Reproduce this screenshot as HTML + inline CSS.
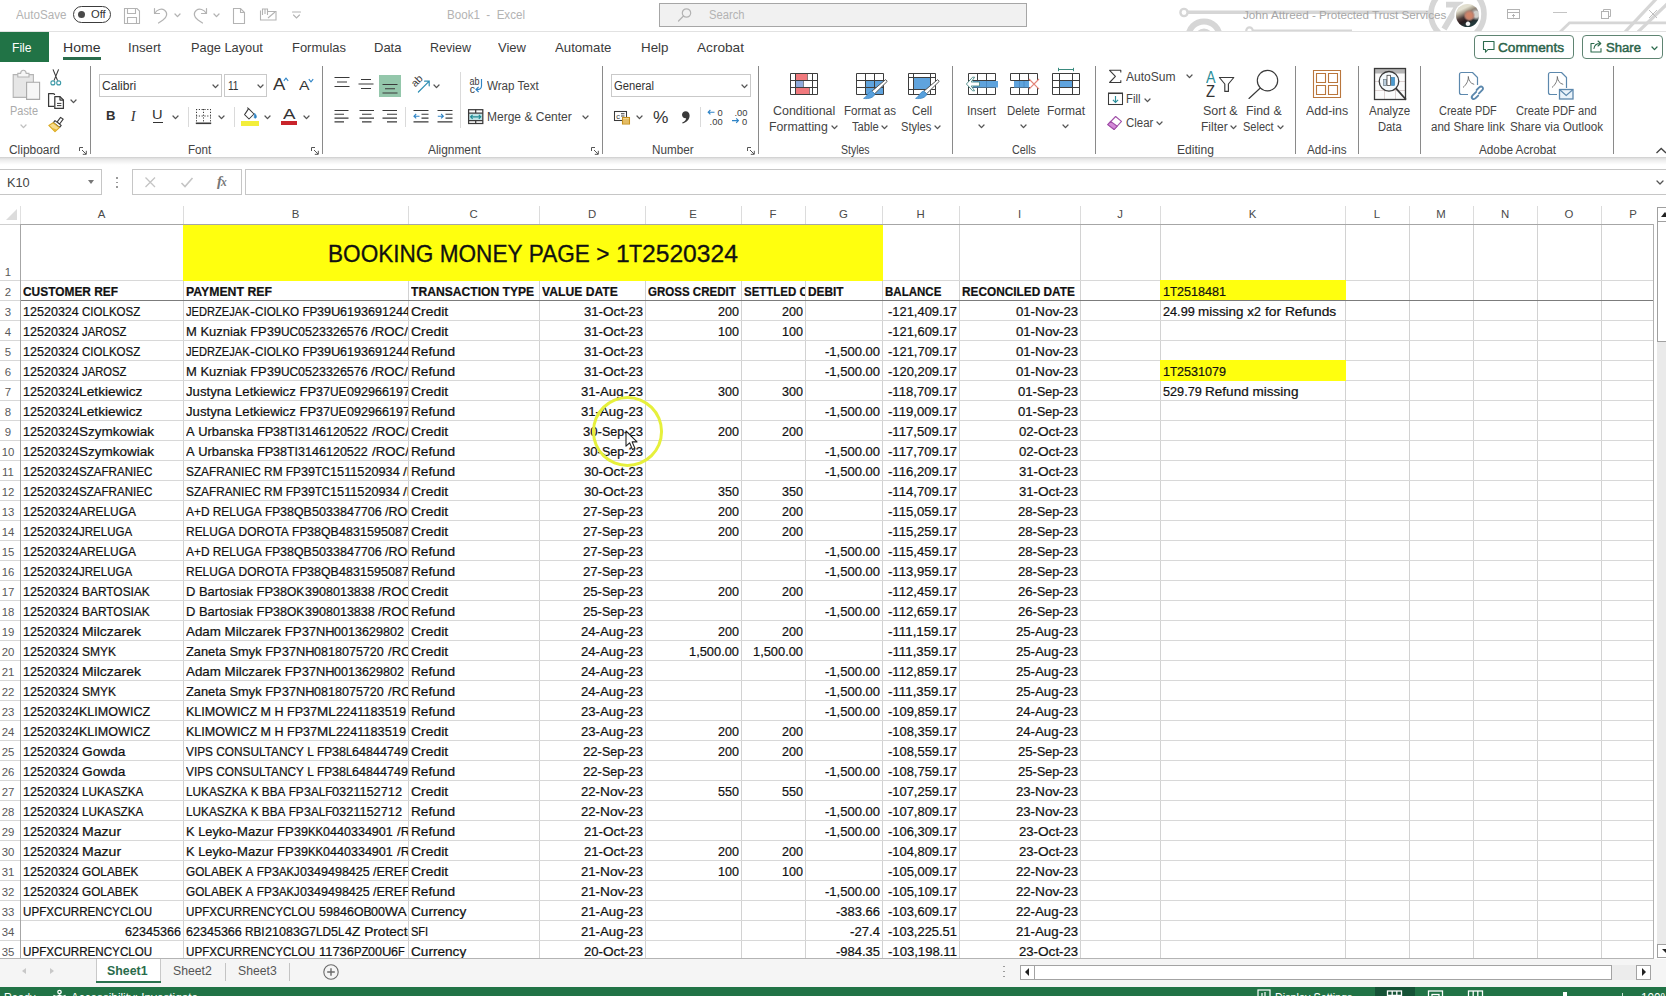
<!DOCTYPE html>
<html><head><meta charset="utf-8"><title>Book1 - Excel</title>
<style>
html,body{margin:0;padding:0;background:#fff}
body{width:1666px;height:996px;overflow:hidden}
#root{position:relative;width:1666px;height:996px;overflow:hidden;background:#fff;font-family:"Liberation Sans",sans-serif;color:#000}
div,span{box-sizing:border-box}
#grid{position:absolute;left:0;top:0;width:1666px;height:959px;overflow:hidden;pointer-events:none}
#grid>div{position:absolute}
.c{height:20px;line-height:20px;font-size:13.3px;white-space:nowrap;overflow:hidden;color:#111;padding-top:1px;-webkit-text-stroke:0.22px #111}
.c.b{font-weight:bold}
.c i{display:inline-block;font-style:normal;height:20px;vertical-align:top;text-align:left;overflow:visible}
.c u{display:inline-block;text-decoration:none;transform-origin:0 50%;white-space:pre}
.vl{top:225px;width:1px;height:734px;background:#d2d2d2}
.vl2{top:206px;width:1px;height:18px;background:#dcdcdc}
.hl{left:0;width:1654px;height:1px;background:#d8d8d8}
.ch{top:205px;width:20px;height:19px;line-height:19px;text-align:center;font-size:11.4px;color:#4a4a4a}
.rh{left:-4px;width:24px;height:20px;line-height:20px;text-align:center;font-size:11.4px;color:#5a5a5a;padding-top:1px}
.yl{background:#ffff0e}
.title{height:56px;line-height:56px;text-align:center;white-space:nowrap;color:#111;overflow:hidden;-webkit-text-stroke:0.3px #111}
.title i{display:inline-block;font-style:normal;height:56px;vertical-align:top;text-align:left}
.title u{display:inline-block;text-decoration:none;transform-origin:0 50%;white-space:pre}
.a{position:absolute;display:block}
.t{position:absolute;white-space:nowrap;line-height:1;transform-origin:0 50%;display:block}
svg{overflow:visible}

</style></head>
<body>
<div id="root">
<svg class="a" style="left:0px;top:0px;overflow:hidden;" width="1666" height="31" viewBox="0 0 1666 31">
<g fill="none" stroke="#d6d6d6" stroke-width="3" stroke-linecap="butt">
<path d="M1188 12.2 H1432" stroke-width="3.4"/>
<circle cx="1184" cy="12.5" r="3.6" stroke-width="2.4"/>
<circle cx="1204" cy="37" r="15.6" stroke-width="6"/>
<circle cx="1204" cy="37.5" r="7.6" stroke-width="3"/>
<circle cx="1249.5" cy="30.5" r="3.2" stroke-width="2.2"/>
<path d="M1253 31 H1352"/>
<circle cx="1457.5" cy="14" r="26.5" stroke-width="5.6"/>
<path d="M1446 4.6 H1458.5 L1444 29" stroke-width="5.8"/>
<path d="M1666 22.8 H1569.5 L1560 32" stroke-width="2.8"/>
<path d="M1657 -2 L1625 32" stroke-width="3.2"/>
<path d="M1668 3 L1638 32" stroke-width="3.2"/>
</g></svg>
<span class="t" style="left:16.0px;top:8.8px;font-size:12px;color:#b3b3b3;transform:scaleX(0.9704);">AutoSave</span>
<div class="a" style="left:72.5px;top:6px;width:38.5px;height:16.5px;background:#fff;border:1.4px solid #3c3c3c;border-radius:9px;"></div>
<div class="a" style="left:78px;top:10.8px;width:6.799999999999997px;height:6.800000000000001px;background:#4a4a4a;border-radius:4px;"></div>
<span class="t" style="left:91.3px;top:9.0px;font-size:11.5px;color:#333;transform:scaleX(0.9718);">Off</span>
<svg class="a" style="left:123px;top:7px;" width="18" height="18" viewBox="0 0 18 18"><g fill="none" stroke="#b3b3b3" stroke-width="1.1"><path d="M1.5 1.5 H14 L16.5 4 V16.5 H1.5 Z"/><path d="M4.5 1.5 V6.5 H12.5 V1.5"/><path d="M4.5 16.5 V10.5 H13.5 V16.5"/></g></svg>
<svg class="a" style="left:152px;top:6px;" width="18" height="18" viewBox="0 0 18 18"><g fill="none" stroke="#b3b3b3" stroke-width="1.2" stroke-linecap="round" stroke-linejoin="round"><path d="M2.5 2.5 V7.5 H7.5"/><path d="M2.8 7.2 C5 3.5 9.5 2 12.6 4.2 C16 6.8 15 11.5 11 14 L6.5 17"/></g></svg>
<svg class="a" style="left:174.0px;top:12.5px;" width="7.0" height="4.6" viewBox="0 0 7.0 4.6"><path d="M1 1 L3.5 3.6 L6.0 1" fill="none" stroke="#b3b3b3" stroke-width="1.3" stroke-linecap="round" stroke-linejoin="round"/></svg>
<svg class="a" style="left:191px;top:6px;" width="18" height="18" viewBox="0 0 18 18"><g fill="none" stroke="#b3b3b3" stroke-width="1.2" stroke-linecap="round" stroke-linejoin="round"><path d="M15.5 2.5 V7.5 H10.5"/><path d="M15.2 7.2 C13 3.5 8.5 2 5.4 4.2 C2 6.8 3 11.5 7 14 L11.5 17"/></g></svg>
<svg class="a" style="left:213.0px;top:12.5px;" width="7.0" height="4.6" viewBox="0 0 7.0 4.6"><path d="M1 1 L3.5 3.6 L6.0 1" fill="none" stroke="#b3b3b3" stroke-width="1.3" stroke-linecap="round" stroke-linejoin="round"/></svg>
<svg class="a" style="left:231px;top:7px;" width="16" height="18" viewBox="0 0 16 18"><g fill="none" stroke="#b3b3b3" stroke-width="1.1"><path d="M2.5 1.5 H9.5 L13.5 5.5 V16.5 H2.5 Z"/><path d="M9.5 1.5 V5.5 H13.5"/></g></svg>
<svg class="a" style="left:259px;top:7px;" width="19" height="15" viewBox="0 0 19 15"><g fill="none" stroke="#b3b3b3" stroke-width="1.1"><path d="M1.5 3.5 V13 H17 V4.5 H9"/><path d="M3.5 8 V2 H8.5 V8"/><path d="M6 2 V7"/><path d="M9 11 L16 5"/></g></svg>
<svg class="a" style="left:291px;top:10px;" width="11" height="10" viewBox="0 0 11 10"><g fill="none" stroke="#b3b3b3" stroke-width="1.1" stroke-linecap="round"><path d="M1.5 2 H9.5"/><path d="M2.5 5 L5.5 8 L8.5 5"/></g></svg>
<span class="t" style="left:446.5px;top:9.1px;font-size:12px;color:#b3b3b3;transform:scaleX(0.9665);white-space:pre;">Book1  -  Excel</span>
<div class="a" style="left:659px;top:3px;width:368px;height:24px;background:#f1f1f1;border:1px solid #a6a6a6;"></div>
<svg class="a" style="left:676px;top:7px;" width="18" height="16" viewBox="0 0 18 16"><g fill="none" stroke="#b3b3b3" stroke-width="1.2" stroke-linecap="round"><circle cx="10.5" cy="6" r="4.2"/><path d="M7.5 9 L2.5 14"/></g></svg>
<span class="t" style="left:709.0px;top:8.8px;font-size:12px;color:#b3b3b3;transform:scaleX(0.9336);">Search</span>
<span class="t" style="left:1242.5px;top:9.8px;font-size:11.4px;color:#a6a6a6;transform:scaleX(1.0261);">John Attreed - Protected Trust Services</span>
<div class="a" style="left:1456.2px;top:4.2px;width:22.8px;height:22.8px;border-radius:50%;box-shadow:0 0 0 1.6px #fff;background:radial-gradient(circle at 52% 86%, #f4f4f4 0 7%, rgba(255,255,255,0) 12%),radial-gradient(circle at 58% 50%, #cf8468 0 14%, #b9806e 22%, rgba(160,110,100,0) 34%),radial-gradient(circle at 88% 45%, #cfcfcb 0 12%, rgba(200,200,200,0) 26%),linear-gradient(155deg, #e2dfcf 0 24%, #a79d8c 36%, #4a3a38 50%, #2a1c1e 62%, #22383a 80%, #1c3a3c 100%)"></div>
<svg class="a" style="left:1506px;top:8px;" width="15" height="12" viewBox="0 0 15 12"><g fill="none" stroke="#b3b3b3" stroke-width="1"><rect x="1.5" y="1.5" width="12" height="9"/><path d="M1.5 4.5 H13.5"/><path d="M7.5 6 V9.5 M6 7.5 H9"/></g></svg>
<div class="a" style="left:1553px;top:11.5px;width:14px;height:1.0px;background:#c4c4c4;"></div>
<svg class="a" style="left:1600px;top:8px;" width="12" height="12" viewBox="0 0 12 12"><g fill="none" stroke="#b3b3b3" stroke-width="1"><rect x="1.5" y="3.5" width="7" height="7"/><path d="M3.5 3.5 V1.5 H10.5 V8.5 H8.5"/></g></svg>
<svg class="a" style="left:1647.5px;top:9px;" width="10" height="10" viewBox="0 0 10 10"><g fill="none" stroke="#c0c0c0" stroke-width="1"><path d="M1 1 L9 9 M9 1 L1 9"/></g></svg>
<div class="a" style="left:0px;top:31px;width:1666px;height:1px;background:#e2e2e2;"></div>
<div class="a" style="left:0px;top:32px;width:49px;height:30px;background:#217346;"></div>
<span class="t" style="left:11.7px;top:42.0px;font-size:12.2px;color:#fff;transform:scaleX(0.9970);">File</span>
<span class="t" style="left:63.0px;top:42.0px;font-size:12.2px;color:#333;transform:scaleX(1.1523);">Home</span>
<span class="t" style="left:127.5px;top:42.0px;font-size:12.2px;color:#3b3b3b;transform:scaleX(1.0815);">Insert</span>
<span class="t" style="left:190.5px;top:42.0px;font-size:12.2px;color:#3b3b3b;transform:scaleX(1.0509);">Page Layout</span>
<span class="t" style="left:291.5px;top:42.0px;font-size:12.2px;color:#3b3b3b;transform:scaleX(1.0620);">Formulas</span>
<span class="t" style="left:373.5px;top:42.0px;font-size:12.2px;color:#3b3b3b;transform:scaleX(1.0671);">Data</span>
<span class="t" style="left:429.5px;top:42.0px;font-size:12.2px;color:#3b3b3b;transform:scaleX(1.0249);">Review</span>
<span class="t" style="left:497.5px;top:42.0px;font-size:12.2px;color:#3b3b3b;transform:scaleX(1.0677);">View</span>
<span class="t" style="left:554.5px;top:42.0px;font-size:12.2px;color:#3b3b3b;transform:scaleX(1.0819);">Automate</span>
<span class="t" style="left:640.5px;top:42.0px;font-size:12.2px;color:#3b3b3b;transform:scaleX(1.0960);">Help</span>
<span class="t" style="left:696.5px;top:42.0px;font-size:12.2px;color:#3b3b3b;transform:scaleX(1.1178);">Acrobat</span>
<div class="a" style="left:63px;top:57px;width:38px;height:3px;background:#2a6c4c;"></div>
<div class="a" style="left:1474px;top:35px;width:100px;height:23.5px;background:#fff;border:1px solid #5f8472;border-radius:4px;"></div>
<svg class="a" style="left:1482px;top:40px;" width="14" height="14" viewBox="0 0 14 14"><path d="M1.5 1.5 H12 V9.5 H6 L3.5 12.2 V9.5 H1.5 Z" fill="none" stroke="#2b6a4c" stroke-width="1.1" stroke-linejoin="round"/></svg>
<span class="t" style="left:1498.0px;top:41.8px;font-size:12.5px;color:#2b6349;transform:scaleX(1.0921);-webkit-text-stroke:0.45px #2b6349;">Comments</span>
<div class="a" style="left:1582px;top:35px;width:81px;height:23.5px;background:#fff;border:1px solid #5f8472;border-radius:4px;"></div>
<svg class="a" style="left:1589px;top:39px;" width="15" height="15" viewBox="0 0 15 15"><g fill="none" stroke="#2b6a4c" stroke-width="1.1" stroke-linejoin="round" stroke-linecap="round"><path d="M5 4.5 H2 V13 H12 V9.5"/><path d="M5 9.5 C5.5 6 8 4.5 11 4.5 M9 2 L11.8 4.5 L9 7"/></g></svg>
<span class="t" style="left:1605.5px;top:41.8px;font-size:12.5px;color:#2b6349;transform:scaleX(1.0492);-webkit-text-stroke:0.45px #2b6349;">Share</span>
<svg class="a" style="left:1651.0px;top:45.9px;" width="7.0" height="4.6" viewBox="0 0 7.0 4.6"><path d="M1 1 L3.5 3.6 L6.0 1" fill="none" stroke="#2b6a4c" stroke-width="1.3" stroke-linecap="round" stroke-linejoin="round"/></svg>
<div class="a" style="left:0;top:157px;width:1666px;height:8px;background:linear-gradient(#c9c9c9 0,#dedede 1px,#ececec 3px,#f8f8f8 6px,#fff 8px)"></div>
<div class="a" style="left:-1px;top:169px;width:103px;height:26px;background:#fff;border:1px solid #c6c6c6;"></div>
<span class="t" style="left:6.8px;top:177.0px;font-size:12px;color:#444;transform:scaleX(1.0631);">K10</span>
<div class="a" style="left:87.5px;top:179.5px;width:0;height:0;border-left:3.6px solid transparent;border-right:3.6px solid transparent;border-top:4.2px solid #777"></div>
<div class="a" style="left:116px;top:177px;width:1.5px;height:1.5px;background:#9a9a9a;"></div>
<div class="a" style="left:116px;top:181.7px;width:1.5px;height:1.5px;background:#9a9a9a;"></div>
<div class="a" style="left:116px;top:186.2px;width:1.5px;height:1.5px;background:#9a9a9a;"></div>
<div class="a" style="left:132px;top:169px;width:110px;height:26px;background:#fff;border:1px solid #c6c6c6;"></div>
<svg class="a" style="left:144px;top:176px;" width="13" height="13" viewBox="0 0 13 13"><path d="M1.5 1.5 L11 11 M11 1.5 L1.5 11" stroke="#c4c4c4" stroke-width="1.3" fill="none"/></svg>
<svg class="a" style="left:180px;top:176px;" width="15" height="13" viewBox="0 0 15 13"><path d="M1.5 7 L5 10.5 L12.5 2" stroke="#c4c4c4" stroke-width="1.6" fill="none"/></svg>
<span class="t" style="left:217px;top:174px;font-family:'Liberation Serif',serif;font-style:italic;font-weight:bold;font-size:15px;color:#777;letter-spacing:-1px">f<span style="font-size:11.5px">x</span></span>
<div class="a" style="left:245px;top:169px;width:1422px;height:26px;background:#fff;border:1px solid #c6c6c6;"></div>
<svg class="a" style="left:1656.0px;top:179.7px;" width="8" height="5" viewBox="0 0 8 5"><path d="M1 1 L4.0 4 L7 1" fill="none" stroke="#555" stroke-width="1.3" stroke-linecap="round" stroke-linejoin="round"/></svg>
<svg class="a" style="left:11px;top:68px;" width="30" height="33" viewBox="0 0 30 33"><g stroke="#b4b4b4" stroke-width="1.1">
<path d="M2.2 6.6 H22.4 V29.4 H2.2 Z" fill="#e6e6e6"/>
<path d="M6.8 9 V5.4 H9.6 C9.8 1.2 15 1.2 15.2 5.4 H18 V9 Z" fill="#f6f6f6"/>
<path d="M15.6 14.2 H28.6 V31.4 H15.6 Z" fill="#f6f6f6" stroke="#a9a9a9"/></g></svg>
<span class="t" style="left:10.0px;top:104.7px;font-size:12px;color:#ababab;transform:scaleX(0.9125);">Paste</span>
<svg class="a" style="left:20.0px;top:124.0px;" width="7.0" height="4.6" viewBox="0 0 7.0 4.6"><path d="M1 1 L3.5 3.6 L6.0 1" fill="none" stroke="#c0c0c0" stroke-width="1.3" stroke-linecap="round" stroke-linejoin="round"/></svg>
<svg class="a" style="left:49px;top:68px;" width="14" height="18" viewBox="0 0 14 18"><g fill="none" stroke-width="1.1"><path d="M4 1.4 L8.6 12.6 M9.6 1.4 L5 12.6" stroke="#3a3a3a"/>
<circle cx="3.9" cy="14.9" r="2" stroke="#3c9aa8"/><circle cx="9.7" cy="14.9" r="2" stroke="#3c9aa8"/></g></svg>
<svg class="a" style="left:47px;top:92px;" width="18" height="18" viewBox="0 0 18 18"><g fill="none" stroke="#3a3a3a" stroke-width="1.25" stroke-linejoin="round"><path d="M7 14.4 H1.6 V1.6 H6.2 Q7.6 1.6 7.6 3"/><path d="M7.8 4.6 H13 L16.4 8 V16.4 H7.8 Z" fill="#fff"/><path d="M13 4.6 V8 H16.4"/>
<path d="M10 11.4 H14.4 M10 13.6 H14.4" stroke-width="1"/></g></svg>
<svg class="a" style="left:69.8px;top:99.0px;" width="7.0" height="4.6" viewBox="0 0 7.0 4.6"><path d="M1 1 L3.5 3.6 L6.0 1" fill="none" stroke="#555" stroke-width="1.3" stroke-linecap="round" stroke-linejoin="round"/></svg>
<svg class="a" style="left:47px;top:116px;" width="18" height="17" viewBox="0 0 18 17"><g stroke-width="1.1" stroke-linejoin="round"><path d="M13.6 1.4 L16.2 3.2 L12.6 8 L10 6.2 Z" fill="#fff" stroke="#3a3a3a"/>
<path d="M8 4.6 L14.2 9.4 L12.6 11.4 L6.4 6.6 Z" fill="#fff" stroke="#3a3a3a"/>
<path d="M6.2 6.8 L12.4 11.6 L8 15.6 L1.8 9.4 Z" fill="#f7dc8c" stroke="#d9a820"/><path d="M3.6 11.2 L8 15.6 L10 13.8 Z" fill="#e6b832" stroke="none"/></g></svg>
<span class="t" style="left:9.0px;top:144.1px;font-size:12px;color:#444;transform:scaleX(0.9929);">Clipboard</span>
<svg class="a" style="left:79px;top:146.5px;" width="8" height="8" viewBox="0 0 8 8"><g fill="none" stroke="#555" stroke-width="1"><path d="M0.5 4 V0.5 H4"/><path d="M3 3 L7 7"/><path d="M7.3 3.8 V7.3 H3.8"/></g></svg>
<div class="a" style="left:90px;top:66px;width:1px;height:88px;background:#8a8a8a;"></div>
<div class="a" style="left:99px;top:74px;width:123px;height:23px;background:#fff;border:1px solid #c9c9c9;"></div>
<span class="t" style="left:102.3px;top:79.8px;font-size:12px;color:#333;transform:scaleX(1.0056);">Calibri</span>
<svg class="a" style="left:212.0px;top:83.7px;" width="7.0" height="4.6" viewBox="0 0 7.0 4.6"><path d="M1 1 L3.5 3.6 L6.0 1" fill="none" stroke="#555" stroke-width="1.3" stroke-linecap="round" stroke-linejoin="round"/></svg>
<div class="a" style="left:224px;top:74px;width:42.5px;height:23px;background:#fff;border:1px solid #c9c9c9;"></div>
<span class="t" style="left:227.5px;top:79.8px;font-size:12px;color:#333;transform:scaleX(0.8429);">11</span>
<svg class="a" style="left:256.5px;top:83.7px;" width="7.0" height="4.6" viewBox="0 0 7.0 4.6"><path d="M1 1 L3.5 3.6 L6.0 1" fill="none" stroke="#555" stroke-width="1.3" stroke-linecap="round" stroke-linejoin="round"/></svg>
<span class="t" style="left:272.7px;top:75.7px;font-size:16.5px;color:#333;transform:scaleX(1.1176);">A</span>
<svg class="a" style="left:283px;top:77px;" width="6" height="5" viewBox="0 0 6 5"><path d="M0.8 3.8 L3 1.2 L5.2 3.8" fill="none" stroke="#2f84c6" stroke-width="1.1"/></svg>
<span class="t" style="left:298.5px;top:78.9px;font-size:13.2px;color:#333;transform:scaleX(1.1925);">A</span>
<svg class="a" style="left:307.5px;top:77.5px;" width="6" height="5" viewBox="0 0 6 5"><path d="M0.8 1.2 L3 3.8 L5.2 1.2" fill="none" stroke="#2f84c6" stroke-width="1.1"/></svg>
<span class="t" style="left:105.5px;top:109.0px;font-size:13.5px;color:#333;transform:scaleX(0.9744);font-weight:bold;">B</span>
<span class="t" style="left:130.8px;top:108.6px;font-size:14.5px;font-style:italic;color:#333;font-family:'Liberation Serif',serif">I</span>
<span class="t" style="left:152.1px;top:109.1px;font-size:12.5px;color:#333;transform:scaleX(1.1742);">U</span>
<div class="a" style="left:152.5px;top:121.8px;width:10.0px;height:1.1000000000000085px;background:#333;"></div>
<svg class="a" style="left:171.8px;top:115.2px;" width="7.0" height="4.6" viewBox="0 0 7.0 4.6"><path d="M1 1 L3.5 3.6 L6.0 1" fill="none" stroke="#555" stroke-width="1.3" stroke-linecap="round" stroke-linejoin="round"/></svg>
<div class="a" style="left:188px;top:107px;width:1px;height:20px;background:#dadada;"></div>
<svg class="a" style="left:195px;top:108px;" width="17" height="17" viewBox="0 0 17 17"><g fill="none" stroke="#3a3a3a"><path d="M1 1.5 H16 M1.5 1 V14 M15.5 1 V14 M8.5 1 V14 M1 8 H16" stroke-width="1" stroke-dasharray="1.2 1.6"/>
<path d="M0.8 15.3 H16.2" stroke-width="1.6"/></g></svg>
<svg class="a" style="left:217.8px;top:115.2px;" width="7.0" height="4.6" viewBox="0 0 7.0 4.6"><path d="M1 1 L3.5 3.6 L6.0 1" fill="none" stroke="#555" stroke-width="1.3" stroke-linecap="round" stroke-linejoin="round"/></svg>
<div class="a" style="left:234px;top:107px;width:1px;height:20px;background:#dadada;"></div>
<svg class="a" style="left:242px;top:107px;" width="17" height="14" viewBox="0 0 17 14"><g fill="none" stroke="#3a3a3a" stroke-width="1.05" stroke-linejoin="round"><path d="M6.6 1.6 L12 7 L7 12 L2.6 7.6 Z" fill="#fff"/>
<path d="M6.6 1.6 L5.2 0.6" /><path d="M12.6 6.2 C14.4 8.2 15 9.8 13.9 11 C12.8 11.8 11.8 10.8 12.3 9.4 Z" stroke="#2f84c6" fill="#2f84c6" stroke-width="0.6"/></g></svg>
<div class="a" style="left:240.5px;top:121px;width:18.0px;height:5px;background:#f3ee3a;"></div>
<svg class="a" style="left:263.9px;top:115.2px;" width="7.0" height="4.6" viewBox="0 0 7.0 4.6"><path d="M1 1 L3.5 3.6 L6.0 1" fill="none" stroke="#555" stroke-width="1.3" stroke-linecap="round" stroke-linejoin="round"/></svg>
<span class="t" style="left:283.0px;top:107.7px;font-size:13.8px;color:#333;transform:scaleX(1.3580);">A</span>
<div class="a" style="left:281px;top:121px;width:16px;height:4.200000000000003px;background:#c9242b;"></div>
<svg class="a" style="left:303.2px;top:115.2px;" width="7.0" height="4.6" viewBox="0 0 7.0 4.6"><path d="M1 1 L3.5 3.6 L6.0 1" fill="none" stroke="#555" stroke-width="1.3" stroke-linecap="round" stroke-linejoin="round"/></svg>
<span class="t" style="left:187.5px;top:144.1px;font-size:12px;color:#444;transform:scaleX(0.9703);">Font</span>
<svg class="a" style="left:311.3px;top:146.5px;" width="8" height="8" viewBox="0 0 8 8"><g fill="none" stroke="#555" stroke-width="1"><path d="M0.5 4 V0.5 H4"/><path d="M3 3 L7 7"/><path d="M7.3 3.8 V7.3 H3.8"/></g></svg>
<div class="a" style="left:322px;top:66px;width:1px;height:88px;background:#8a8a8a;"></div>
<svg class="a" style="left:334px;top:75px;" width="16" height="14" viewBox="0 0 16 14"><path d="M0.5 2.5 H15.5 M3 7 H13 M0.5 11.5 H15.5 " fill="none" stroke="#3a3a3a" stroke-width="1.1"/></svg>
<svg class="a" style="left:358px;top:77px;" width="16" height="14" viewBox="0 0 16 14"><path d="M3 2.5 H13 M0.5 7 H15.5 M3 11.5 H13 " fill="none" stroke="#3a3a3a" stroke-width="1.1"/></svg>
<div class="a" style="left:379px;top:74.5px;width:22px;height:22.5px;background:#94c7ab;"></div>
<svg class="a" style="left:382px;top:82px;" width="16" height="13" viewBox="0 0 16 13"><path d="M0.5 2.5 H15.5 M3 6.8 H13 M0.5 11 H15.5 " fill="none" stroke="#3a3a3a" stroke-width="1.1"/></svg>
<svg class="a" style="left:412px;top:76px;" width="19" height="17" viewBox="0 0 19 17"><g fill="none" stroke-linecap="round"><path d="M6.4 16 L17 5.4 M12.6 5.2 H17.2 V9.8" stroke="#2f8fb4" stroke-width="1.2"/>
<text x="0" y="0" font-size="10.5" font-family="Liberation Sans" fill="#3a3a3a" stroke="none" transform="translate(3.2 11.4) rotate(-45)">ab</text></g></svg>
<svg class="a" style="left:432.5px;top:83.7px;" width="7.0" height="4.6" viewBox="0 0 7.0 4.6"><path d="M1 1 L3.5 3.6 L6.0 1" fill="none" stroke="#555" stroke-width="1.3" stroke-linecap="round" stroke-linejoin="round"/></svg>
<div class="a" style="left:460px;top:72px;width:1px;height:56px;background:#dadada;"></div>
<svg class="a" style="left:469px;top:76px;" width="17" height="18" viewBox="0 0 17 18"><text x="0.6" y="8.6" font-size="10.5" font-family="Liberation Sans" fill="#3a3a3a" textLength="10" lengthAdjust="spacingAndGlyphs">ab</text><text x="0.8" y="17" font-size="10.5" font-family="Liberation Sans" fill="#3a3a3a">c</text>
<path d="M12.5 3 V10 C12.5 13 10 13.6 7.2 13.4 M9.6 10.8 L7 13.4 L9.6 16" fill="none" stroke="#2f84c6" stroke-width="1.15"/></svg>
<span class="t" style="left:487.3px;top:80.1px;font-size:12px;color:#444;transform:scaleX(0.9668);">Wrap Text</span>
<svg class="a" style="left:334px;top:109px;" width="16" height="16" viewBox="0 0 16 16"><path d="M0.5 1.5 H14.5 M0.5 5.3 H10 M0.5 9.1 H14.5 M0.5 12.9 H10 " fill="none" stroke="#3a3a3a" stroke-width="1.1"/></svg>
<svg class="a" style="left:358.5px;top:109px;" width="16" height="16" viewBox="0 0 16 16"><path d="M0.5 1.5 H15 M3 5.3 H12.5 M0.5 9.1 H15 M3 12.9 H12.5 " fill="none" stroke="#3a3a3a" stroke-width="1.1"/></svg>
<svg class="a" style="left:382px;top:109px;" width="16" height="16" viewBox="0 0 16 16"><path d="M0.5 1.5 H15 M5 5.3 H15 M0.5 9.1 H15 M5 12.9 H15 " fill="none" stroke="#3a3a3a" stroke-width="1.1"/></svg>
<div class="a" style="left:405px;top:107px;width:1px;height:20px;background:#dadada;"></div>
<svg class="a" style="left:413px;top:109px;" width="17" height="16" viewBox="0 0 17 16"><path d="M0.5 1.5 H15.5 M8.5 5.3 H15.5 M8.5 9.1 H15.5 M0.5 12.9 H15.5 " fill="none" stroke="#3a3a3a" stroke-width="1.1"/><path d="M6.5 7.2 H1 M3.2 5 L1 7.2 L3.2 9.4" fill="none" stroke="#2f84c6" stroke-width="1.15"/></svg>
<svg class="a" style="left:437px;top:109px;" width="17" height="16" viewBox="0 0 17 16"><path d="M0.5 1.5 H15.5 M8.5 5.3 H15.5 M8.5 9.1 H15.5 M0.5 12.9 H15.5 " fill="none" stroke="#3a3a3a" stroke-width="1.1"/><path d="M0.8 7.2 H6.3 M4.1 5 L6.3 7.2 L4.1 9.4" fill="none" stroke="#2f84c6" stroke-width="1.15"/></svg>
<svg class="a" style="left:467px;top:108px;" width="17" height="17" viewBox="0 0 17 17"><rect x="2.2" y="5.6" width="13" height="6.4" fill="#bfe4e6"/>
<g fill="none" stroke="#3a3a3a" stroke-width="1.25"><rect x="1.6" y="1.7" width="14.2" height="13.8"/><path d="M1.6 5 H15.8 M1.6 12.6 H15.8 M8.7 1.7 V5 M8.7 12.6 V15.5"/></g>
<path d="M3.6 8.8 H13.8 M5.6 6.8 L3.6 8.8 L5.6 10.8 M11.8 6.8 L13.8 8.8 L11.8 10.8" fill="none" stroke="#1f8a94" stroke-width="1.15"/></svg>
<span class="t" style="left:487.3px;top:110.9px;font-size:12px;color:#444;transform:scaleX(1.0011);">Merge &amp; Center</span>
<svg class="a" style="left:582.0px;top:115.2px;" width="7.0" height="4.6" viewBox="0 0 7.0 4.6"><path d="M1 1 L3.5 3.6 L6.0 1" fill="none" stroke="#555" stroke-width="1.3" stroke-linecap="round" stroke-linejoin="round"/></svg>
<span class="t" style="left:427.9px;top:144.1px;font-size:12px;color:#444;transform:scaleX(0.9913);">Alignment</span>
<svg class="a" style="left:591.3px;top:146.5px;" width="8" height="8" viewBox="0 0 8 8"><g fill="none" stroke="#555" stroke-width="1"><path d="M0.5 4 V0.5 H4"/><path d="M3 3 L7 7"/><path d="M7.3 3.8 V7.3 H3.8"/></g></svg>
<div class="a" style="left:602px;top:66px;width:1px;height:88px;background:#8a8a8a;"></div>
<div class="a" style="left:611px;top:74px;width:140px;height:23px;background:#fff;border:1px solid #c9c9c9;"></div>
<span class="t" style="left:614.1px;top:79.8px;font-size:12px;color:#333;transform:scaleX(0.9346);">General</span>
<svg class="a" style="left:740.9px;top:83.7px;" width="7.0" height="4.6" viewBox="0 0 7.0 4.6"><path d="M1 1 L3.5 3.6 L6.0 1" fill="none" stroke="#555" stroke-width="1.3" stroke-linecap="round" stroke-linejoin="round"/></svg>
<svg class="a" style="left:613px;top:110px;" width="18" height="15" viewBox="0 0 18 15"><g stroke-width="1.05"><rect x="1.5" y="1.5" width="12" height="9" fill="#fff" stroke="#3a3a3a"/><text x="3.2" y="9" font-size="7.5" font-family="Liberation Sans" fill="#3a3a3a">c</text>
<path d="M8 3.8 H11.5 M8 6 H11.5" stroke="#3a3a3a" fill="none"/><rect x="9.5" y="7.5" width="7" height="6.5" fill="#f4d58c" stroke="#c58f1c"/><path d="M10 10 H16 M10 12 H16" stroke="#c58f1c" stroke-width="0.7"/></g></svg>
<svg class="a" style="left:636.1px;top:115.2px;" width="7.0" height="4.6" viewBox="0 0 7.0 4.6"><path d="M1 1 L3.5 3.6 L6.0 1" fill="none" stroke="#555" stroke-width="1.3" stroke-linecap="round" stroke-linejoin="round"/></svg>
<span class="t" style="left:653.1px;top:108.5px;font-size:16.5px;color:#333;transform:scaleX(1.0497);">%</span>
<svg class="a" style="left:680px;top:110px;" width="11" height="15" viewBox="0 0 11 15"><path d="M5.6 1.2 C8 1.2 9.6 3 9.6 5.6 C9.6 9.4 6.8 12.6 2.6 13.6 L2.2 12.6 C4.6 11.6 6 10 6.2 8.2 C3.8 8.6 2 7 2 4.8 C2 2.8 3.6 1.2 5.6 1.2 Z" fill="#3a3a3a"/></svg>
<div class="a" style="left:700px;top:107px;width:1px;height:20px;background:#dadada;"></div>
<svg class="a" style="left:707px;top:109px;" width="18" height="16" viewBox="0 0 18 16"><path d="M7.5 3.2 H1.2 M3.4 1 L1.2 3.2 L3.4 5.4" fill="none" stroke="#2f84c6" stroke-width="1.15"/>
<text x="10.4" y="7.2" font-size="9.4" font-family="Liberation Sans" fill="#3a3a3a" textLength="5.2" lengthAdjust="spacingAndGlyphs">0</text><text x="2.6" y="15.8" font-size="9.4" font-family="Liberation Sans" fill="#3a3a3a" textLength="13" lengthAdjust="spacingAndGlyphs">.00</text></svg>
<svg class="a" style="left:731px;top:109px;" width="18" height="16" viewBox="0 0 18 16"><text x="3.4" y="7.2" font-size="9.4" font-family="Liberation Sans" fill="#3a3a3a" textLength="13" lengthAdjust="spacingAndGlyphs">.00</text>
<path d="M1 11.6 H7.4 M5.2 9.4 L7.4 11.6 L5.2 13.8" fill="none" stroke="#2f84c6" stroke-width="1.15"/><text x="11" y="15.8" font-size="9.4" font-family="Liberation Sans" fill="#3a3a3a" textLength="5.2" lengthAdjust="spacingAndGlyphs">0</text></svg>
<span class="t" style="left:651.9px;top:144.1px;font-size:12px;color:#444;transform:scaleX(0.9747);">Number</span>
<svg class="a" style="left:747.4px;top:146.5px;" width="8" height="8" viewBox="0 0 8 8"><g fill="none" stroke="#555" stroke-width="1"><path d="M0.5 4 V0.5 H4"/><path d="M3 3 L7 7"/><path d="M7.3 3.8 V7.3 H3.8"/></g></svg>
<div class="a" style="left:758px;top:66px;width:1px;height:88px;background:#8a8a8a;"></div>
<svg class="a" style="left:0px;top:0px;" width="1666" height="160" viewBox="0 0 1666 160"><rect x="791" y="74" width="26" height="20" fill="#fff"/><rect x="796" y="74" width="11.5" height="6.5" fill="#f0797d"/><rect x="796" y="81" width="7.5" height="6.5" fill="#8ea9db"/><rect x="796" y="88" width="13.5" height="6.5" fill="#f0797d"/><path d="M790.5 73.5 H817.5 V94.5 H790.5 Z M795.5 73.5 V94.5 M812.5 73.5 V94.5 M790.5 80.5 H817.5 M790.5 87.5 H817.5 " fill="none" stroke="#3d3d3d" stroke-width="1"/><path d="M807.5 74 V80.5 M803.5 81 V87.5 M809.5 88 V94" stroke="#3d3d3d" stroke-width="1" opacity="0.55"/><rect x="857" y="74" width="26" height="20" fill="#fff"/><rect x="866" y="81" width="17" height="13" fill="#5fa3dd"/><path d="M856.5 73.5 H883.5 V94.5 H856.5 Z M865.5 73.5 V94.5 M874.5 73.5 V94.5 M856.5 80.5 H883.5 M856.5 87.5 H883.5 " fill="none" stroke="#3d3d3d" stroke-width="1"/><path d="M885.6 79.6 L887.2 81.4 L874.6 93.8 L871.6 91.4 Z" fill="#fff" stroke="#555" stroke-width="1"/><path d="M871.4 91 L875 94 C873.6 97.6 869 99.2 863.6 98.4 C867.4 96.8 867.2 92.8 871.4 91 Z" fill="#58a0dc" stroke="#3c86c4" stroke-width="0.8"/><rect x="909" y="74" width="26" height="20" fill="#fff"/><rect x="914" y="78" width="16" height="11" fill="#5fa3dd"/><path d="M908.5 73.5 H935.5 V94.5 H908.5 Z M913.5 73.5 V94.5 M930.5 73.5 V94.5 M908.5 77.5 H935.5 M908.5 89.5 H935.5 " fill="none" stroke="#3d3d3d" stroke-width="1"/><path d="M937.6 79.6 L939.2 81.4 L926.6 93.8 L923.6 91.4 Z" fill="#fff" stroke="#555" stroke-width="1"/><path d="M923.4 91 L927 94 C925.6 97.6 921 99.2 915.6 98.4 C919.4 96.8 919.2 92.8 923.4 91 Z" fill="#58a0dc" stroke="#3c86c4" stroke-width="0.8"/><rect x="969" y="74" width="26" height="20" fill="#fff"/><path d="M968.5 73.5 H995.5 V94.5 H968.5 Z M977.5 73.5 V94.5 M986.5 73.5 V94.5 M968.5 80.5 H995.5 M968.5 87.5 H995.5 " fill="none" stroke="#3d3d3d" stroke-width="1"/><rect x="973" y="81" width="25" height="6.5" fill="#5fa3dd"/><path d="M977.5 81 V87.5 M986.5 81 V87.5" stroke="#3c78b4" stroke-width="1" opacity="0.6"/><path d="M979.5 82 H971.2 L974.6 77.2 L972.6 77.2 L966.4 84 L972.6 90.8 L974.6 90.8 L971.2 86 H979.5 Z" fill="#fff" stroke="#4a8a86" stroke-width="0.9" stroke-linejoin="round"/><rect x="1011" y="74" width="26" height="20" fill="#fff"/><path d="M1010.5 80.5 V73.5 H1037.5 V80.5 M1010.5 87.5 V94.5 H1037.5 V87.5 M1019.5 73.5 V80.5 M1028.5 73.5 V80.5 M1019.5 87.5 V94.5 M1028.5 87.5 V94.5 M1010.5 80.5 H1030 M1010.5 87.5 H1030" fill="none" stroke="#3d3d3d" stroke-width="1"/><rect x="1014" y="81" width="15" height="6.5" fill="#5fa3dd"/><path d="M1019.5 81 V87.5 M1024 81 V87.5" stroke="#3c78b4" stroke-width="1" opacity="0.5"/><path d="M1029 79 L1039 89.2 M1039 79 L1029 89.2" stroke="#e3867a" stroke-width="1.2" fill="none"/><path d="M1058.5 69.5 H1073.5 M1058.5 67.8 V71.2 M1073.5 67.8 V71.2" stroke="#3a8a7e" stroke-width="1" fill="none"/><rect x="1053" y="74" width="26" height="20" fill="#fff"/><rect x="1060" y="81" width="12" height="6.5" fill="#5fa3dd"/><path d="M1052.5 73.5 H1079.5 V94.5 H1052.5 Z M1059.5 73.5 V94.5 M1072.5 73.5 V94.5 M1052.5 80.5 H1079.5 M1052.5 87.5 H1079.5 " fill="none" stroke="#3d3d3d" stroke-width="1"/><path d="M1313.5 70.5 H1340.5 V97.5 H1313.5 Z M1316.5 73.5 H1325.5 V82.5 H1316.5 Z M1328.5 73.5 H1337.5 V82.5 H1328.5 Z M1316.5 85.5 H1325.5 V94.5 H1316.5 Z M1328.5 85.5 H1337.5 V94.5 H1328.5 Z" fill="none" stroke="#b9763c" stroke-width="1.1"/><rect x="1374.5" y="68.5" width="31" height="31" fill="#fbfbfb"/><rect x="1375" y="69" width="30" height="4.5" fill="#b4b4b4"/><path d="M1375 81.5 H1405 M1375 90.5 H1405 M1384.5 74 V99 M1395.5 74 V99" stroke="#ddd2d2" stroke-width="1" fill="none"/><rect x="1374.5" y="68.5" width="31" height="31" fill="none" stroke="#3a3a3a" stroke-width="1.3"/><circle cx="1389" cy="81.3" r="9.8" fill="#f4fafd" stroke="#3a3a3a" stroke-width="1.3"/><rect x="1383.5" y="79.5" width="3" height="6" fill="#b9cddc" stroke="#6d7f8c" stroke-width="0.7"/><rect x="1387" y="75.3" width="3.6" height="10.2" fill="#fff" stroke="#444" stroke-width="0.8"/><rect x="1391.3" y="77.4" width="3.3" height="8.1" fill="#4a9bd0" stroke="#3a7fae" stroke-width="0.6"/><path d="M1396 88.4 L1406 99.6" stroke="#3a3a3a" stroke-width="1.7" fill="none"/><path d="M1468.0 94.5 H1461.5 Q1459.5 94.5 1459.5 92.5 V74.5 Q1459.5 72.5 1461.5 72.5 H1472.5 L1477.5 77.5 V85" fill="none" stroke="#5c88ad" stroke-width="1.2" stroke-linejoin="round"/><path d="M1468.3 76.5 C1468.6 81 1466.0 85 1463.0 87.5 M1468.3 76.5 C1468.6 80.5 1470.5 83.5 1474.2 84.4" fill="none" stroke="#6a6a6a" stroke-width="0.9"/><g fill="none" stroke="#5c88ad" stroke-width="1.9" stroke-linecap="round"><path d="M1476.2 91.8 L1472.6 95.4 C1470.4 97.6 1473.2 100.6 1475.6 98.2 L1478.2 95.6"/><path d="M1478.4 89.8 L1481.6 86.6 C1483.8 84.4 1481 81.6 1478.6 83.8 L1476 86.4" transform="translate(0.6 3.6)"/></g><path d="M1557.0 94.5 H1550.5 Q1548.5 94.5 1548.5 92.5 V74.5 Q1548.5 72.5 1550.5 72.5 H1561.5 L1566.5 77.5 V88" fill="none" stroke="#5c88ad" stroke-width="1.2" stroke-linejoin="round"/><path d="M1557.3 76.5 C1557.6 81 1555.0 85 1552.0 87.5 M1557.3 76.5 C1557.6 80.5 1559.5 83.5 1563.2 84.4" fill="none" stroke="#6a6a6a" stroke-width="0.9"/><rect x="1559.5" y="89.5" width="13.5" height="9.5" fill="#eaf3fa" stroke="#5c88ad" stroke-width="1.3"/><path d="M1559.8 89.8 L1566.2 95.4 L1572.7 89.8" fill="none" stroke="#5c88ad" stroke-width="1.2"/></svg>
<span class="t" style="left:772.8px;top:104.8px;font-size:12px;color:#444;transform:scaleX(1.0376);">Conditional</span>
<span class="t" style="left:769.1px;top:120.6px;font-size:12px;color:#444;transform:scaleX(1.0252);">Formatting</span>
<svg class="a" style="left:831.3px;top:125.2px;" width="7.0" height="4.6" viewBox="0 0 7.0 4.6"><path d="M1 1 L3.5 3.6 L6.0 1" fill="none" stroke="#555" stroke-width="1.3" stroke-linecap="round" stroke-linejoin="round"/></svg>
<span class="t" style="left:844.1px;top:104.8px;font-size:12px;color:#444;transform:scaleX(0.9646);">Format as</span>
<span class="t" style="left:851.9px;top:120.6px;font-size:12px;color:#444;transform:scaleX(0.9342);">Table</span>
<svg class="a" style="left:881.0px;top:125.2px;" width="7.0" height="4.6" viewBox="0 0 7.0 4.6"><path d="M1 1 L3.5 3.6 L6.0 1" fill="none" stroke="#555" stroke-width="1.3" stroke-linecap="round" stroke-linejoin="round"/></svg>
<span class="t" style="left:912.0px;top:104.8px;font-size:12px;color:#444;transform:scaleX(0.9675);">Cell</span>
<span class="t" style="left:901.2px;top:120.6px;font-size:12px;color:#444;transform:scaleX(0.9272);">Styles</span>
<svg class="a" style="left:933.8px;top:125.2px;" width="7.0" height="4.6" viewBox="0 0 7.0 4.6"><path d="M1 1 L3.5 3.6 L6.0 1" fill="none" stroke="#555" stroke-width="1.3" stroke-linecap="round" stroke-linejoin="round"/></svg>
<span class="t" style="left:841.2px;top:144.1px;font-size:12px;color:#444;transform:scaleX(0.8752);">Styles</span>
<div class="a" style="left:952px;top:66px;width:1px;height:88px;background:#8a8a8a;"></div>
<span class="t" style="left:966.9px;top:104.8px;font-size:12px;color:#444;transform:scaleX(0.9696);">Insert</span>
<svg class="a" style="left:977.8px;top:124.2px;" width="7.0" height="4.6" viewBox="0 0 7.0 4.6"><path d="M1 1 L3.5 3.6 L6.0 1" fill="none" stroke="#555" stroke-width="1.3" stroke-linecap="round" stroke-linejoin="round"/></svg>
<span class="t" style="left:1007.2px;top:104.8px;font-size:12px;color:#444;transform:scaleX(0.9484);">Delete</span>
<svg class="a" style="left:1020.1px;top:124.2px;" width="7.0" height="4.6" viewBox="0 0 7.0 4.6"><path d="M1 1 L3.5 3.6 L6.0 1" fill="none" stroke="#555" stroke-width="1.3" stroke-linecap="round" stroke-linejoin="round"/></svg>
<span class="t" style="left:1047.2px;top:104.8px;font-size:12px;color:#444;transform:scaleX(1.0025);">Format</span>
<svg class="a" style="left:1061.5px;top:124.2px;" width="7.0" height="4.6" viewBox="0 0 7.0 4.6"><path d="M1 1 L3.5 3.6 L6.0 1" fill="none" stroke="#555" stroke-width="1.3" stroke-linecap="round" stroke-linejoin="round"/></svg>
<span class="t" style="left:1012.0px;top:144.1px;font-size:12px;color:#444;transform:scaleX(0.8998);">Cells</span>
<div class="a" style="left:1095px;top:66px;width:1px;height:88px;background:#8a8a8a;"></div>
<svg class="a" style="left:1108px;top:69px;" width="15" height="15" viewBox="0 0 15 15"><path d="M12.8 3.6 V1.3 H1.6 L7.4 7.4 L1.6 13.5 H12.8 V11.2" fill="none" stroke="#3a3a3a" stroke-width="1.1" stroke-linejoin="round"/></svg>
<span class="t" style="left:1126.1px;top:71.1px;font-size:12px;color:#444;transform:scaleX(1.0048);">AutoSum</span>
<svg class="a" style="left:1185.7px;top:73.7px;" width="7.0" height="4.6" viewBox="0 0 7.0 4.6"><path d="M1 1 L3.5 3.6 L6.0 1" fill="none" stroke="#555" stroke-width="1.3" stroke-linecap="round" stroke-linejoin="round"/></svg>
<svg class="a" style="left:1106.5px;top:92px;" width="17" height="14" viewBox="0 0 17 14"><g fill="none" stroke-width="1.05"><path d="M1 1.2 H16" stroke="#3a3a3a" stroke-width="1.4"/><rect x="1.5" y="1.5" width="14" height="11" stroke="#3a3a3a"/>
<path d="M8.5 4 V10.2 M5.9 7.8 L8.5 10.4 L11.1 7.8" stroke="#2a8f9b" stroke-width="1.15"/></g></svg>
<span class="t" style="left:1126.1px;top:93.4px;font-size:12px;color:#444;transform:scaleX(0.9394);">Fill</span>
<svg class="a" style="left:1144.3px;top:97.9px;" width="7.0" height="4.6" viewBox="0 0 7.0 4.6"><path d="M1 1 L3.5 3.6 L6.0 1" fill="none" stroke="#555" stroke-width="1.3" stroke-linecap="round" stroke-linejoin="round"/></svg>
<svg class="a" style="left:1106px;top:115px;" width="17" height="16" viewBox="0 0 17 16"><path d="M9.6 1.5 L15.5 6.4 L8.2 14.5 L1.8 9.6 Z" fill="#fff" stroke="#a04fa8" stroke-width="1.1" stroke-linejoin="round"/>
<path d="M4.7 6.4 L11.2 11.2 L8.2 14.5 L1.8 9.6 Z" fill="#d48ad8" stroke="#a04fa8" stroke-width="1.1" stroke-linejoin="round"/></svg>
<span class="t" style="left:1126.1px;top:116.6px;font-size:12px;color:#444;transform:scaleX(0.9520);">Clear</span>
<svg class="a" style="left:1156.2px;top:121.0px;" width="7.0" height="4.6" viewBox="0 0 7.0 4.6"><path d="M1 1 L3.5 3.6 L6.0 1" fill="none" stroke="#555" stroke-width="1.3" stroke-linecap="round" stroke-linejoin="round"/></svg>
<span class="t" style="left:1205.7px;top:68.5px;font-size:16.5px;color:#2a8f9b;transform:scaleX(0.8723);">A</span>
<span class="t" style="left:1206.3px;top:82.9px;font-size:16.5px;color:#333;transform:scaleX(0.8929);">Z</span>
<svg class="a" style="left:1218px;top:76px;" width="18" height="18" viewBox="0 0 18 18"><path d="M1.4 1.5 H15.8 L10.4 8 V15.4 H6.8 V8 Z" fill="none" stroke="#3a3a3a" stroke-width="1.15" stroke-linejoin="round"/></svg>
<span class="t" style="left:1202.6px;top:104.8px;font-size:12px;color:#444;transform:scaleX(1.0406);">Sort &amp;</span>
<span class="t" style="left:1201.2px;top:120.6px;font-size:12px;color:#444;transform:scaleX(1.0012);">Filter</span>
<svg class="a" style="left:1229.9px;top:125.2px;" width="7.0" height="4.6" viewBox="0 0 7.0 4.6"><path d="M1 1 L3.5 3.6 L6.0 1" fill="none" stroke="#555" stroke-width="1.3" stroke-linecap="round" stroke-linejoin="round"/></svg>
<svg class="a" style="left:1247px;top:68px;" width="33" height="33" viewBox="0 0 33 33"><g fill="none" stroke="#3a3a3a" stroke-width="1.15"><circle cx="20.5" cy="12.6" r="10.2"/><path d="M13.3 20 L2 30.5" stroke-linecap="round"/></g></svg>
<span class="t" style="left:1246.2px;top:104.8px;font-size:12px;color:#444;transform:scaleX(1.0264);">Find &amp;</span>
<span class="t" style="left:1243.3px;top:120.6px;font-size:12px;color:#444;transform:scaleX(0.9175);">Select</span>
<svg class="a" style="left:1276.9px;top:125.2px;" width="7.0" height="4.6" viewBox="0 0 7.0 4.6"><path d="M1 1 L3.5 3.6 L6.0 1" fill="none" stroke="#555" stroke-width="1.3" stroke-linecap="round" stroke-linejoin="round"/></svg>
<span class="t" style="left:1177.0px;top:144.1px;font-size:12px;color:#444;transform:scaleX(1.0056);">Editing</span>
<div class="a" style="left:1295px;top:66px;width:1px;height:88px;background:#8a8a8a;"></div>
<span class="t" style="left:1305.8px;top:104.8px;font-size:12px;color:#444;transform:scaleX(1.0371);">Add-ins</span>
<span class="t" style="left:1307.3px;top:144.1px;font-size:12px;color:#444;transform:scaleX(0.9757);">Add-ins</span>
<div class="a" style="left:1358px;top:66px;width:1px;height:88px;background:#8a8a8a;"></div>
<span class="t" style="left:1369.0px;top:104.8px;font-size:12px;color:#444;transform:scaleX(0.9650);">Analyze</span>
<span class="t" style="left:1378.3px;top:120.6px;font-size:12px;color:#444;transform:scaleX(0.9310);">Data</span>
<div class="a" style="left:1420px;top:66px;width:1px;height:88px;background:#8a8a8a;"></div>
<span class="t" style="left:1439.2px;top:104.8px;font-size:12px;color:#444;transform:scaleX(0.9123);">Create PDF</span>
<span class="t" style="left:1431.2px;top:120.5px;font-size:12px;color:#444;transform:scaleX(0.9619);">and Share link</span>
<span class="t" style="left:1516.2px;top:104.8px;font-size:12px;color:#444;transform:scaleX(0.9295);">Create PDF and</span>
<span class="t" style="left:1510.1px;top:120.5px;font-size:12px;color:#444;transform:scaleX(0.9760);">Share via Outlook</span>
<span class="t" style="left:1479.0px;top:144.1px;font-size:12px;color:#444;transform:scaleX(0.9793);">Adobe Acrobat</span>
<div class="a" style="left:1613px;top:66px;width:1px;height:88px;background:#8a8a8a;"></div>
<svg class="a" style="left:1655px;top:147px;" width="12" height="8" viewBox="0 0 12 8"><path d="M1.5 6 L6.2 1.5 L11 6" fill="none" stroke="#444" stroke-width="1.3"/></svg>
<div id="grid">
<div class="ch" style="left:91.5px">A</div>
<div class="vl2" style="left:183px"></div>
<div class="ch" style="left:285.5px">B</div>
<div class="vl2" style="left:408px"></div>
<div class="ch" style="left:463.5px">C</div>
<div class="vl2" style="left:539px"></div>
<div class="ch" style="left:582.0px">D</div>
<div class="vl2" style="left:645px"></div>
<div class="ch" style="left:683.0px">E</div>
<div class="vl2" style="left:741px"></div>
<div class="ch" style="left:763.0px">F</div>
<div class="vl2" style="left:805px"></div>
<div class="ch" style="left:833.5px">G</div>
<div class="vl2" style="left:882px"></div>
<div class="ch" style="left:910.5px">H</div>
<div class="vl2" style="left:959px"></div>
<div class="ch" style="left:1009.5px">I</div>
<div class="vl2" style="left:1080px"></div>
<div class="ch" style="left:1110.0px">J</div>
<div class="vl2" style="left:1160px"></div>
<div class="ch" style="left:1242.5px">K</div>
<div class="vl2" style="left:1345px"></div>
<div class="ch" style="left:1367.0px">L</div>
<div class="vl2" style="left:1409px"></div>
<div class="ch" style="left:1431.0px">M</div>
<div class="vl2" style="left:1473px"></div>
<div class="ch" style="left:1495.0px">N</div>
<div class="vl2" style="left:1537px"></div>
<div class="ch" style="left:1559.0px">O</div>
<div class="vl2" style="left:1601px"></div>
<div class="ch" style="left:1623.0px">P</div>
<div class="vl" style="left:183px"></div>
<div class="vl" style="left:408px"></div>
<div class="vl" style="left:539px"></div>
<div class="vl" style="left:645px"></div>
<div class="vl" style="left:741px"></div>
<div class="vl" style="left:805px"></div>
<div class="vl" style="left:882px"></div>
<div class="vl" style="left:959px"></div>
<div class="vl" style="left:1080px"></div>
<div class="vl" style="left:1160px"></div>
<div class="vl" style="left:1345px"></div>
<div class="vl" style="left:1409px"></div>
<div class="vl" style="left:1473px"></div>
<div class="vl" style="left:1537px"></div>
<div class="vl" style="left:1601px"></div>
<div class="hl" style="top:280px"></div>
<div class="hl" style="top:300px"></div>
<div class="hl" style="top:320px"></div>
<div class="hl" style="top:340px"></div>
<div class="hl" style="top:360px"></div>
<div class="hl" style="top:380px"></div>
<div class="hl" style="top:400px"></div>
<div class="hl" style="top:420px"></div>
<div class="hl" style="top:440px"></div>
<div class="hl" style="top:460px"></div>
<div class="hl" style="top:480px"></div>
<div class="hl" style="top:500px"></div>
<div class="hl" style="top:520px"></div>
<div class="hl" style="top:540px"></div>
<div class="hl" style="top:560px"></div>
<div class="hl" style="top:580px"></div>
<div class="hl" style="top:600px"></div>
<div class="hl" style="top:620px"></div>
<div class="hl" style="top:640px"></div>
<div class="hl" style="top:660px"></div>
<div class="hl" style="top:680px"></div>
<div class="hl" style="top:700px"></div>
<div class="hl" style="top:720px"></div>
<div class="hl" style="top:740px"></div>
<div class="hl" style="top:760px"></div>
<div class="hl" style="top:780px"></div>
<div class="hl" style="top:800px"></div>
<div class="hl" style="top:820px"></div>
<div class="hl" style="top:840px"></div>
<div class="hl" style="top:860px"></div>
<div class="hl" style="top:880px"></div>
<div class="hl" style="top:900px"></div>
<div class="hl" style="top:920px"></div>
<div class="hl" style="top:940px"></div>
<div class="rh" style="top:261px">1</div>
<div class="rh" style="top:281px">2</div>
<div class="rh" style="top:301px">3</div>
<div class="rh" style="top:321px">4</div>
<div class="rh" style="top:341px">5</div>
<div class="rh" style="top:361px">6</div>
<div class="rh" style="top:381px">7</div>
<div class="rh" style="top:401px">8</div>
<div class="rh" style="top:421px">9</div>
<div class="rh" style="top:441px">10</div>
<div class="rh" style="top:461px">11</div>
<div class="rh" style="top:481px">12</div>
<div class="rh" style="top:501px">13</div>
<div class="rh" style="top:521px">14</div>
<div class="rh" style="top:541px">15</div>
<div class="rh" style="top:561px">16</div>
<div class="rh" style="top:581px">17</div>
<div class="rh" style="top:601px">18</div>
<div class="rh" style="top:621px">19</div>
<div class="rh" style="top:641px">20</div>
<div class="rh" style="top:661px">21</div>
<div class="rh" style="top:681px">22</div>
<div class="rh" style="top:701px">23</div>
<div class="rh" style="top:721px">24</div>
<div class="rh" style="top:741px">25</div>
<div class="rh" style="top:761px">26</div>
<div class="rh" style="top:781px">27</div>
<div class="rh" style="top:801px">28</div>
<div class="rh" style="top:821px">29</div>
<div class="rh" style="top:841px">30</div>
<div class="rh" style="top:861px">31</div>
<div class="rh" style="top:881px">32</div>
<div class="rh" style="top:901px">33</div>
<div class="rh" style="top:921px">34</div>
<div class="rh" style="top:941px">35</div>
<div class="yl" style="left:183px;top:225px;width:700px;height:56px"></div>
<div class="yl" style="left:1160px;top:280px;width:186px;height:21px"></div>
<div class="yl" style="left:1160px;top:360px;width:186px;height:21px"></div>
<div class="title" style="left:184px;top:225.8px;width:698px;font-size:23.6px"><i style="width:287.77px"><u style="transform:scaleX(0.9575)">BOOKING MONEY PAGE &gt; </u></i><i style="width:13.70px"><u style="transform:scaleX(1.0436)">1</u></i><i style="width:13.14px"><u style="transform:scaleX(0.9116)">T</u></i><i style="width:95.89px"><u style="transform:scaleX(1.0436)">2520324</u></i></div>
<div class="c b" style="left:23px;top:281px;width:160px;"><i style="width:95.08px"><u style="transform:scaleX(0.8956)">CUSTOMER REF</u></i></div>
<div class="c b" style="left:186px;top:281px;width:222px;"><i style="width:85.98px"><u style="transform:scaleX(0.9233)">PAYMENT REF</u></i></div>
<div class="c b" style="left:411px;top:281px;width:128px;"><i style="width:123.22px"><u style="transform:scaleX(0.9112)">TRANSACTION TYPE</u></i></div>
<div class="c b" style="left:542px;top:281px;width:103px;"><i style="width:75.80px"><u style="transform:scaleX(0.9132)">VALUE DATE</u></i></div>
<div class="c b" style="left:648px;top:281px;width:93px;"><i style="width:87.83px"><u style="transform:scaleX(0.8676)">GROSS CREDIT</u></i></div>
<div class="c b" style="left:744px;top:281px;width:61px;"><i style="width:98.12px"><u style="transform:scaleX(0.8623)">SETTLED CREDIT</u></i></div>
<div class="c b" style="left:808px;top:281px;width:74px;"><i style="width:35.53px"><u style="transform:scaleX(0.8905)">DEBIT</u></i></div>
<div class="c b" style="left:885px;top:281px;width:74px;"><i style="width:56.40px"><u style="transform:scaleX(0.8674)">BALANCE</u></i></div>
<div class="c b" style="left:962px;top:281px;width:118px;"><i style="width:112.79px"><u style="transform:scaleX(0.8892)">RECONCILED DATE</u></i></div>
<div class="c" style="left:23px;top:301px;width:160px;"><i style="width:59.32px"><u style="transform:scaleX(0.9434)">12520324 </u></i><i style="width:58.33px"><u style="transform:scaleX(0.8673)">CIOLKOSZ</u></i></div>
<div class="c" style="left:186px;top:301px;width:222px;"><i style="width:63.64px"><u style="transform:scaleX(0.8360)">JEDRZEJAK</u></i><i style="width:5.00px"><u style="transform:scaleX(1.1285)">-</u></i><i style="width:62.35px"><u style="transform:scaleX(0.8789)">CIOLKO FP</u></i><i style="width:14.00px"><u style="transform:scaleX(0.9463)">39</u></i><i style="width:9.41px"><u style="transform:scaleX(0.9797)">U</u></i><i style="width:70.00px"><u style="transform:scaleX(0.9463)">6193691244</u></i></div>
<div class="c" style="left:411px;top:301px;width:128px;"><i style="width:37.21px"><u style="transform:scaleX(1.0488)">Credit</u></i></div>
<div class="c" style="left:540px;top:301px;width:103px;text-align:right;"><i style="width:19.00px"><u style="transform:scaleX(0.9883)">31-</u></i><i style="width:21.21px"><u style="transform:scaleX(1.0254)">Oct</u></i><i style="width:19.00px"><u style="transform:scaleX(0.9883)">-23</u></i></div>
<div class="c" style="left:646px;top:301px;width:93px;text-align:right;"><i style="width:21.00px"><u style="transform:scaleX(0.9463)">200</u></i></div>
<div class="c" style="left:742px;top:301px;width:61px;text-align:right;"><i style="width:21.00px"><u style="transform:scaleX(0.9463)">200</u></i></div>
<div class="c" style="left:883px;top:301px;width:74px;text-align:right;"><i style="width:68.99px"><u style="transform:scaleX(0.9718)">-121,409.17</u></i></div>
<div class="c" style="left:960px;top:301px;width:118px;text-align:right;"><i style="width:19.00px"><u style="transform:scaleX(0.9883)">01-</u></i><i style="width:24.33px"><u style="transform:scaleX(1.0286)">Nov</u></i><i style="width:19.00px"><u style="transform:scaleX(0.9883)">-23</u></i></div>
<div class="c" style="left:23px;top:321px;width:160px;"><i style="width:59.32px"><u style="transform:scaleX(0.9434)">12520324 </u></i><i style="width:44.44px"><u style="transform:scaleX(0.8471)">JAROSZ</u></i></div>
<div class="c" style="left:186px;top:321px;width:222px;"><i style="width:80.71px"><u style="transform:scaleX(0.9750)">M Kuzniak FP</u></i><i style="width:14.00px"><u style="transform:scaleX(0.9463)">39</u></i><i style="width:17.23px"><u style="transform:scaleX(0.8969)">UC</u></i><i style="width:73.32px"><u style="transform:scaleX(0.9440)">0523326576 </u></i><i style="width:36.82px"><u style="transform:scaleX(0.9967)">/ROC/</u></i></div>
<div class="c" style="left:411px;top:321px;width:128px;"><i style="width:37.21px"><u style="transform:scaleX(1.0488)">Credit</u></i></div>
<div class="c" style="left:540px;top:321px;width:103px;text-align:right;"><i style="width:19.00px"><u style="transform:scaleX(0.9883)">31-</u></i><i style="width:21.21px"><u style="transform:scaleX(1.0254)">Oct</u></i><i style="width:19.00px"><u style="transform:scaleX(0.9883)">-23</u></i></div>
<div class="c" style="left:646px;top:321px;width:93px;text-align:right;"><i style="width:21.00px"><u style="transform:scaleX(0.9463)">100</u></i></div>
<div class="c" style="left:742px;top:321px;width:61px;text-align:right;"><i style="width:21.00px"><u style="transform:scaleX(0.9463)">100</u></i></div>
<div class="c" style="left:883px;top:321px;width:74px;text-align:right;"><i style="width:68.99px"><u style="transform:scaleX(0.9718)">-121,609.17</u></i></div>
<div class="c" style="left:960px;top:321px;width:118px;text-align:right;"><i style="width:19.00px"><u style="transform:scaleX(0.9883)">01-</u></i><i style="width:24.33px"><u style="transform:scaleX(1.0286)">Nov</u></i><i style="width:19.00px"><u style="transform:scaleX(0.9883)">-23</u></i></div>
<div class="c" style="left:23px;top:341px;width:160px;"><i style="width:59.32px"><u style="transform:scaleX(0.9434)">12520324 </u></i><i style="width:58.33px"><u style="transform:scaleX(0.8673)">CIOLKOSZ</u></i></div>
<div class="c" style="left:186px;top:341px;width:222px;"><i style="width:63.64px"><u style="transform:scaleX(0.8360)">JEDRZEJAK</u></i><i style="width:5.00px"><u style="transform:scaleX(1.1285)">-</u></i><i style="width:62.35px"><u style="transform:scaleX(0.8789)">CIOLKO FP</u></i><i style="width:14.00px"><u style="transform:scaleX(0.9463)">39</u></i><i style="width:9.41px"><u style="transform:scaleX(0.9797)">U</u></i><i style="width:70.00px"><u style="transform:scaleX(0.9463)">6193691244</u></i></div>
<div class="c" style="left:411px;top:341px;width:128px;"><i style="width:44.08px"><u style="transform:scaleX(1.0277)">Refund</u></i></div>
<div class="c" style="left:540px;top:341px;width:103px;text-align:right;"><i style="width:19.00px"><u style="transform:scaleX(0.9883)">31-</u></i><i style="width:21.21px"><u style="transform:scaleX(1.0254)">Oct</u></i><i style="width:19.00px"><u style="transform:scaleX(0.9883)">-23</u></i></div>
<div class="c" style="left:806px;top:341px;width:74px;text-align:right;"><i style="width:54.99px"><u style="transform:scaleX(0.9785)">-1,500.00</u></i></div>
<div class="c" style="left:883px;top:341px;width:74px;text-align:right;"><i style="width:68.99px"><u style="transform:scaleX(0.9718)">-121,709.17</u></i></div>
<div class="c" style="left:960px;top:341px;width:118px;text-align:right;"><i style="width:19.00px"><u style="transform:scaleX(0.9883)">01-</u></i><i style="width:24.33px"><u style="transform:scaleX(1.0286)">Nov</u></i><i style="width:19.00px"><u style="transform:scaleX(0.9883)">-23</u></i></div>
<div class="c" style="left:23px;top:361px;width:160px;"><i style="width:59.32px"><u style="transform:scaleX(0.9434)">12520324 </u></i><i style="width:44.44px"><u style="transform:scaleX(0.8471)">JAROSZ</u></i></div>
<div class="c" style="left:186px;top:361px;width:222px;"><i style="width:80.71px"><u style="transform:scaleX(0.9750)">M Kuzniak FP</u></i><i style="width:14.00px"><u style="transform:scaleX(0.9463)">39</u></i><i style="width:17.23px"><u style="transform:scaleX(0.8969)">UC</u></i><i style="width:73.32px"><u style="transform:scaleX(0.9440)">0523326576 </u></i><i style="width:36.82px"><u style="transform:scaleX(0.9967)">/ROC/</u></i></div>
<div class="c" style="left:411px;top:361px;width:128px;"><i style="width:44.08px"><u style="transform:scaleX(1.0277)">Refund</u></i></div>
<div class="c" style="left:540px;top:361px;width:103px;text-align:right;"><i style="width:19.00px"><u style="transform:scaleX(0.9883)">31-</u></i><i style="width:21.21px"><u style="transform:scaleX(1.0254)">Oct</u></i><i style="width:19.00px"><u style="transform:scaleX(0.9883)">-23</u></i></div>
<div class="c" style="left:806px;top:361px;width:74px;text-align:right;"><i style="width:54.99px"><u style="transform:scaleX(0.9785)">-1,500.00</u></i></div>
<div class="c" style="left:883px;top:361px;width:74px;text-align:right;"><i style="width:68.99px"><u style="transform:scaleX(0.9718)">-120,209.17</u></i></div>
<div class="c" style="left:960px;top:361px;width:118px;text-align:right;"><i style="width:19.00px"><u style="transform:scaleX(0.9883)">01-</u></i><i style="width:24.33px"><u style="transform:scaleX(1.0286)">Nov</u></i><i style="width:19.00px"><u style="transform:scaleX(0.9883)">-23</u></i></div>
<div class="c" style="left:23px;top:381px;width:160px;"><i style="width:56.00px"><u style="transform:scaleX(0.9463)">12520324</u></i><i style="width:63.49px"><u style="transform:scaleX(1.0349)">Letkiewicz</u></i></div>
<div class="c" style="left:186px;top:381px;width:222px;"><i style="width:130.23px"><u style="transform:scaleX(0.9898)">Justyna Letkiewicz FP</u></i><i style="width:14.00px"><u style="transform:scaleX(0.9463)">37</u></i><i style="width:16.57px"><u style="transform:scaleX(0.8969)">UE</u></i><i style="width:70.00px"><u style="transform:scaleX(0.9463)">0929661977</u></i></div>
<div class="c" style="left:411px;top:381px;width:128px;"><i style="width:37.21px"><u style="transform:scaleX(1.0488)">Credit</u></i></div>
<div class="c" style="left:540px;top:381px;width:103px;text-align:right;"><i style="width:19.00px"><u style="transform:scaleX(0.9883)">31-</u></i><i style="width:23.61px"><u style="transform:scaleX(0.9975)">Aug</u></i><i style="width:19.00px"><u style="transform:scaleX(0.9883)">-23</u></i></div>
<div class="c" style="left:646px;top:381px;width:93px;text-align:right;"><i style="width:21.00px"><u style="transform:scaleX(0.9463)">300</u></i></div>
<div class="c" style="left:742px;top:381px;width:61px;text-align:right;"><i style="width:21.00px"><u style="transform:scaleX(0.9463)">300</u></i></div>
<div class="c" style="left:883px;top:381px;width:74px;text-align:right;"><i style="width:68.99px"><u style="transform:scaleX(0.9855)">-118,709.17</u></i></div>
<div class="c" style="left:960px;top:381px;width:118px;text-align:right;"><i style="width:19.00px"><u style="transform:scaleX(0.9883)">01-</u></i><i style="width:22.27px"><u style="transform:scaleX(0.9409)">Sep</u></i><i style="width:19.00px"><u style="transform:scaleX(0.9883)">-23</u></i></div>
<div class="c" style="left:23px;top:401px;width:160px;"><i style="width:56.00px"><u style="transform:scaleX(0.9463)">12520324</u></i><i style="width:63.49px"><u style="transform:scaleX(1.0349)">Letkiewicz</u></i></div>
<div class="c" style="left:186px;top:401px;width:222px;"><i style="width:130.23px"><u style="transform:scaleX(0.9898)">Justyna Letkiewicz FP</u></i><i style="width:14.00px"><u style="transform:scaleX(0.9463)">37</u></i><i style="width:16.57px"><u style="transform:scaleX(0.8969)">UE</u></i><i style="width:70.00px"><u style="transform:scaleX(0.9463)">0929661977</u></i></div>
<div class="c" style="left:411px;top:401px;width:128px;"><i style="width:44.08px"><u style="transform:scaleX(1.0277)">Refund</u></i></div>
<div class="c" style="left:540px;top:401px;width:103px;text-align:right;"><i style="width:19.00px"><u style="transform:scaleX(0.9883)">31-</u></i><i style="width:23.61px"><u style="transform:scaleX(0.9975)">Aug</u></i><i style="width:19.00px"><u style="transform:scaleX(0.9883)">-23</u></i></div>
<div class="c" style="left:806px;top:401px;width:74px;text-align:right;"><i style="width:54.99px"><u style="transform:scaleX(0.9785)">-1,500.00</u></i></div>
<div class="c" style="left:883px;top:401px;width:74px;text-align:right;"><i style="width:68.99px"><u style="transform:scaleX(0.9855)">-119,009.17</u></i></div>
<div class="c" style="left:960px;top:401px;width:118px;text-align:right;"><i style="width:19.00px"><u style="transform:scaleX(0.9883)">01-</u></i><i style="width:22.27px"><u style="transform:scaleX(0.9409)">Sep</u></i><i style="width:19.00px"><u style="transform:scaleX(0.9883)">-23</u></i></div>
<div class="c" style="left:23px;top:421px;width:160px;"><i style="width:56.00px"><u style="transform:scaleX(0.9463)">12520324</u></i><i style="width:75.15px"><u style="transform:scaleX(1.0168)">Szymkowiak</u></i></div>
<div class="c" style="left:186px;top:421px;width:222px;"><i style="width:87.47px"><u style="transform:scaleX(0.9699)">A Urbanska FP</u></i><i style="width:14.00px"><u style="transform:scaleX(0.9463)">38</u></i><i style="width:10.84px"><u style="transform:scaleX(0.9174)">TI</u></i><i style="width:73.32px"><u style="transform:scaleX(0.9440)">3146120522 </u></i><i style="width:36.82px"><u style="transform:scaleX(0.9967)">/ROC/</u></i></div>
<div class="c" style="left:411px;top:421px;width:128px;"><i style="width:37.21px"><u style="transform:scaleX(1.0488)">Credit</u></i></div>
<div class="c" style="left:540px;top:421px;width:103px;text-align:right;"><i style="width:19.00px"><u style="transform:scaleX(0.9883)">30-</u></i><i style="width:22.27px"><u style="transform:scaleX(0.9409)">Sep</u></i><i style="width:19.00px"><u style="transform:scaleX(0.9883)">-23</u></i></div>
<div class="c" style="left:646px;top:421px;width:93px;text-align:right;"><i style="width:21.00px"><u style="transform:scaleX(0.9463)">200</u></i></div>
<div class="c" style="left:742px;top:421px;width:61px;text-align:right;"><i style="width:21.00px"><u style="transform:scaleX(0.9463)">200</u></i></div>
<div class="c" style="left:883px;top:421px;width:74px;text-align:right;"><i style="width:68.99px"><u style="transform:scaleX(0.9855)">-117,509.17</u></i></div>
<div class="c" style="left:960px;top:421px;width:118px;text-align:right;"><i style="width:19.00px"><u style="transform:scaleX(0.9883)">02-</u></i><i style="width:21.21px"><u style="transform:scaleX(1.0254)">Oct</u></i><i style="width:19.00px"><u style="transform:scaleX(0.9883)">-23</u></i></div>
<div class="c" style="left:23px;top:441px;width:160px;"><i style="width:56.00px"><u style="transform:scaleX(0.9463)">12520324</u></i><i style="width:75.15px"><u style="transform:scaleX(1.0168)">Szymkowiak</u></i></div>
<div class="c" style="left:186px;top:441px;width:222px;"><i style="width:87.47px"><u style="transform:scaleX(0.9699)">A Urbanska FP</u></i><i style="width:14.00px"><u style="transform:scaleX(0.9463)">38</u></i><i style="width:10.84px"><u style="transform:scaleX(0.9174)">TI</u></i><i style="width:73.32px"><u style="transform:scaleX(0.9440)">3146120522 </u></i><i style="width:36.82px"><u style="transform:scaleX(0.9967)">/ROC/</u></i></div>
<div class="c" style="left:411px;top:441px;width:128px;"><i style="width:44.08px"><u style="transform:scaleX(1.0277)">Refund</u></i></div>
<div class="c" style="left:540px;top:441px;width:103px;text-align:right;"><i style="width:19.00px"><u style="transform:scaleX(0.9883)">30-</u></i><i style="width:22.27px"><u style="transform:scaleX(0.9409)">Sep</u></i><i style="width:19.00px"><u style="transform:scaleX(0.9883)">-23</u></i></div>
<div class="c" style="left:806px;top:441px;width:74px;text-align:right;"><i style="width:54.99px"><u style="transform:scaleX(0.9785)">-1,500.00</u></i></div>
<div class="c" style="left:883px;top:441px;width:74px;text-align:right;"><i style="width:68.99px"><u style="transform:scaleX(0.9855)">-117,709.17</u></i></div>
<div class="c" style="left:960px;top:441px;width:118px;text-align:right;"><i style="width:19.00px"><u style="transform:scaleX(0.9883)">02-</u></i><i style="width:21.21px"><u style="transform:scaleX(1.0254)">Oct</u></i><i style="width:19.00px"><u style="transform:scaleX(0.9883)">-23</u></i></div>
<div class="c" style="left:23px;top:461px;width:160px;"><i style="width:56.00px"><u style="transform:scaleX(0.9463)">12520324</u></i><i style="width:73.43px"><u style="transform:scaleX(0.8716)">SZAFRANIEC</u></i></div>
<div class="c" style="left:186px;top:461px;width:222px;"><i style="width:114.88px"><u style="transform:scaleX(0.8883)">SZAFRANIEC RM FP</u></i><i style="width:14.00px"><u style="transform:scaleX(0.9463)">39</u></i><i style="width:14.97px"><u style="transform:scaleX(0.8442)">TC</u></i><i style="width:73.32px"><u style="transform:scaleX(0.9561)">1511520934 </u></i><i style="width:13.63px"><u style="transform:scaleX(1.0247)">/R</u></i></div>
<div class="c" style="left:411px;top:461px;width:128px;"><i style="width:44.08px"><u style="transform:scaleX(1.0277)">Refund</u></i></div>
<div class="c" style="left:540px;top:461px;width:103px;text-align:right;"><i style="width:19.00px"><u style="transform:scaleX(0.9883)">30-</u></i><i style="width:21.21px"><u style="transform:scaleX(1.0254)">Oct</u></i><i style="width:19.00px"><u style="transform:scaleX(0.9883)">-23</u></i></div>
<div class="c" style="left:806px;top:461px;width:74px;text-align:right;"><i style="width:54.99px"><u style="transform:scaleX(0.9785)">-1,500.00</u></i></div>
<div class="c" style="left:883px;top:461px;width:74px;text-align:right;"><i style="width:68.99px"><u style="transform:scaleX(0.9855)">-116,209.17</u></i></div>
<div class="c" style="left:960px;top:461px;width:118px;text-align:right;"><i style="width:19.00px"><u style="transform:scaleX(0.9883)">31-</u></i><i style="width:21.21px"><u style="transform:scaleX(1.0254)">Oct</u></i><i style="width:19.00px"><u style="transform:scaleX(0.9883)">-23</u></i></div>
<div class="c" style="left:23px;top:481px;width:160px;"><i style="width:56.00px"><u style="transform:scaleX(0.9463)">12520324</u></i><i style="width:73.43px"><u style="transform:scaleX(0.8716)">SZAFRANIEC</u></i></div>
<div class="c" style="left:186px;top:481px;width:222px;"><i style="width:114.88px"><u style="transform:scaleX(0.8883)">SZAFRANIEC RM FP</u></i><i style="width:14.00px"><u style="transform:scaleX(0.9463)">39</u></i><i style="width:14.97px"><u style="transform:scaleX(0.8442)">TC</u></i><i style="width:73.32px"><u style="transform:scaleX(0.9561)">1511520934 </u></i><i style="width:13.63px"><u style="transform:scaleX(1.0247)">/R</u></i></div>
<div class="c" style="left:411px;top:481px;width:128px;"><i style="width:37.21px"><u style="transform:scaleX(1.0488)">Credit</u></i></div>
<div class="c" style="left:540px;top:481px;width:103px;text-align:right;"><i style="width:19.00px"><u style="transform:scaleX(0.9883)">30-</u></i><i style="width:21.21px"><u style="transform:scaleX(1.0254)">Oct</u></i><i style="width:19.00px"><u style="transform:scaleX(0.9883)">-23</u></i></div>
<div class="c" style="left:646px;top:481px;width:93px;text-align:right;"><i style="width:21.00px"><u style="transform:scaleX(0.9463)">350</u></i></div>
<div class="c" style="left:742px;top:481px;width:61px;text-align:right;"><i style="width:21.00px"><u style="transform:scaleX(0.9463)">350</u></i></div>
<div class="c" style="left:883px;top:481px;width:74px;text-align:right;"><i style="width:68.99px"><u style="transform:scaleX(0.9855)">-114,709.17</u></i></div>
<div class="c" style="left:960px;top:481px;width:118px;text-align:right;"><i style="width:19.00px"><u style="transform:scaleX(0.9883)">31-</u></i><i style="width:21.21px"><u style="transform:scaleX(1.0254)">Oct</u></i><i style="width:19.00px"><u style="transform:scaleX(0.9883)">-23</u></i></div>
<div class="c" style="left:23px;top:501px;width:160px;"><i style="width:56.00px"><u style="transform:scaleX(0.9463)">12520324</u></i><i style="width:56.93px"><u style="transform:scaleX(0.8955)">ARELUGA</u></i></div>
<div class="c" style="left:186px;top:501px;width:222px;"><i style="width:94.20px"><u style="transform:scaleX(0.8944)">A+D RELUGA FP</u></i><i style="width:14.00px"><u style="transform:scaleX(0.9463)">38</u></i><i style="width:17.85px"><u style="transform:scaleX(0.9287)">QB</u></i><i style="width:73.32px"><u style="transform:scaleX(0.9440)">5033847706 </u></i><i style="width:31.16px"><u style="transform:scaleX(0.9371)">/ROC</u></i></div>
<div class="c" style="left:411px;top:501px;width:128px;"><i style="width:37.21px"><u style="transform:scaleX(1.0488)">Credit</u></i></div>
<div class="c" style="left:540px;top:501px;width:103px;text-align:right;"><i style="width:19.00px"><u style="transform:scaleX(0.9883)">27-</u></i><i style="width:22.27px"><u style="transform:scaleX(0.9409)">Sep</u></i><i style="width:19.00px"><u style="transform:scaleX(0.9883)">-23</u></i></div>
<div class="c" style="left:646px;top:501px;width:93px;text-align:right;"><i style="width:21.00px"><u style="transform:scaleX(0.9463)">200</u></i></div>
<div class="c" style="left:742px;top:501px;width:61px;text-align:right;"><i style="width:21.00px"><u style="transform:scaleX(0.9463)">200</u></i></div>
<div class="c" style="left:883px;top:501px;width:74px;text-align:right;"><i style="width:68.99px"><u style="transform:scaleX(0.9855)">-115,059.17</u></i></div>
<div class="c" style="left:960px;top:501px;width:118px;text-align:right;"><i style="width:19.00px"><u style="transform:scaleX(0.9883)">28-</u></i><i style="width:22.27px"><u style="transform:scaleX(0.9409)">Sep</u></i><i style="width:19.00px"><u style="transform:scaleX(0.9883)">-23</u></i></div>
<div class="c" style="left:23px;top:521px;width:160px;"><i style="width:56.00px"><u style="transform:scaleX(0.9463)">12520324</u></i><i style="width:53.12px"><u style="transform:scaleX(0.8659)">JRELUGA</u></i></div>
<div class="c" style="left:186px;top:521px;width:222px;"><i style="width:121.43px"><u style="transform:scaleX(0.8995)">RELUGA DOROTA FP</u></i><i style="width:14.00px"><u style="transform:scaleX(0.9463)">38</u></i><i style="width:17.85px"><u style="transform:scaleX(0.9287)">QB</u></i><i style="width:77.00px"><u style="transform:scaleX(0.9463)">48315950877</u></i></div>
<div class="c" style="left:411px;top:521px;width:128px;"><i style="width:37.21px"><u style="transform:scaleX(1.0488)">Credit</u></i></div>
<div class="c" style="left:540px;top:521px;width:103px;text-align:right;"><i style="width:19.00px"><u style="transform:scaleX(0.9883)">27-</u></i><i style="width:22.27px"><u style="transform:scaleX(0.9409)">Sep</u></i><i style="width:19.00px"><u style="transform:scaleX(0.9883)">-23</u></i></div>
<div class="c" style="left:646px;top:521px;width:93px;text-align:right;"><i style="width:21.00px"><u style="transform:scaleX(0.9463)">200</u></i></div>
<div class="c" style="left:742px;top:521px;width:61px;text-align:right;"><i style="width:21.00px"><u style="transform:scaleX(0.9463)">200</u></i></div>
<div class="c" style="left:883px;top:521px;width:74px;text-align:right;"><i style="width:68.99px"><u style="transform:scaleX(0.9855)">-115,259.17</u></i></div>
<div class="c" style="left:960px;top:521px;width:118px;text-align:right;"><i style="width:19.00px"><u style="transform:scaleX(0.9883)">28-</u></i><i style="width:22.27px"><u style="transform:scaleX(0.9409)">Sep</u></i><i style="width:19.00px"><u style="transform:scaleX(0.9883)">-23</u></i></div>
<div class="c" style="left:23px;top:541px;width:160px;"><i style="width:56.00px"><u style="transform:scaleX(0.9463)">12520324</u></i><i style="width:56.93px"><u style="transform:scaleX(0.8955)">ARELUGA</u></i></div>
<div class="c" style="left:186px;top:541px;width:222px;"><i style="width:94.20px"><u style="transform:scaleX(0.8944)">A+D RELUGA FP</u></i><i style="width:14.00px"><u style="transform:scaleX(0.9463)">38</u></i><i style="width:17.85px"><u style="transform:scaleX(0.9287)">QB</u></i><i style="width:73.32px"><u style="transform:scaleX(0.9440)">5033847706 </u></i><i style="width:31.16px"><u style="transform:scaleX(0.9371)">/ROC</u></i></div>
<div class="c" style="left:411px;top:541px;width:128px;"><i style="width:44.08px"><u style="transform:scaleX(1.0277)">Refund</u></i></div>
<div class="c" style="left:540px;top:541px;width:103px;text-align:right;"><i style="width:19.00px"><u style="transform:scaleX(0.9883)">27-</u></i><i style="width:22.27px"><u style="transform:scaleX(0.9409)">Sep</u></i><i style="width:19.00px"><u style="transform:scaleX(0.9883)">-23</u></i></div>
<div class="c" style="left:806px;top:541px;width:74px;text-align:right;"><i style="width:54.99px"><u style="transform:scaleX(0.9785)">-1,500.00</u></i></div>
<div class="c" style="left:883px;top:541px;width:74px;text-align:right;"><i style="width:68.99px"><u style="transform:scaleX(0.9855)">-115,459.17</u></i></div>
<div class="c" style="left:960px;top:541px;width:118px;text-align:right;"><i style="width:19.00px"><u style="transform:scaleX(0.9883)">28-</u></i><i style="width:22.27px"><u style="transform:scaleX(0.9409)">Sep</u></i><i style="width:19.00px"><u style="transform:scaleX(0.9883)">-23</u></i></div>
<div class="c" style="left:23px;top:561px;width:160px;"><i style="width:56.00px"><u style="transform:scaleX(0.9463)">12520324</u></i><i style="width:53.12px"><u style="transform:scaleX(0.8659)">JRELUGA</u></i></div>
<div class="c" style="left:186px;top:561px;width:222px;"><i style="width:121.43px"><u style="transform:scaleX(0.8995)">RELUGA DOROTA FP</u></i><i style="width:14.00px"><u style="transform:scaleX(0.9463)">38</u></i><i style="width:17.85px"><u style="transform:scaleX(0.9287)">QB</u></i><i style="width:77.00px"><u style="transform:scaleX(0.9463)">48315950877</u></i></div>
<div class="c" style="left:411px;top:561px;width:128px;"><i style="width:44.08px"><u style="transform:scaleX(1.0277)">Refund</u></i></div>
<div class="c" style="left:540px;top:561px;width:103px;text-align:right;"><i style="width:19.00px"><u style="transform:scaleX(0.9883)">27-</u></i><i style="width:22.27px"><u style="transform:scaleX(0.9409)">Sep</u></i><i style="width:19.00px"><u style="transform:scaleX(0.9883)">-23</u></i></div>
<div class="c" style="left:806px;top:561px;width:74px;text-align:right;"><i style="width:54.99px"><u style="transform:scaleX(0.9785)">-1,500.00</u></i></div>
<div class="c" style="left:883px;top:561px;width:74px;text-align:right;"><i style="width:68.99px"><u style="transform:scaleX(0.9855)">-113,959.17</u></i></div>
<div class="c" style="left:960px;top:561px;width:118px;text-align:right;"><i style="width:19.00px"><u style="transform:scaleX(0.9883)">28-</u></i><i style="width:22.27px"><u style="transform:scaleX(0.9409)">Sep</u></i><i style="width:19.00px"><u style="transform:scaleX(0.9883)">-23</u></i></div>
<div class="c" style="left:23px;top:581px;width:160px;"><i style="width:59.32px"><u style="transform:scaleX(0.9434)">12520324 </u></i><i style="width:67.83px"><u style="transform:scaleX(0.8966)">BARTOSIAK</u></i></div>
<div class="c" style="left:186px;top:581px;width:222px;"><i style="width:87.19px"><u style="transform:scaleX(0.9750)">D Bartosiak FP</u></i><i style="width:14.00px"><u style="transform:scaleX(0.9463)">38</u></i><i style="width:17.33px"><u style="transform:scaleX(0.9019)">OK</u></i><i style="width:73.32px"><u style="transform:scaleX(0.9440)">3908013838 </u></i><i style="width:36.82px"><u style="transform:scaleX(0.9967)">/ROC/</u></i></div>
<div class="c" style="left:411px;top:581px;width:128px;"><i style="width:37.21px"><u style="transform:scaleX(1.0488)">Credit</u></i></div>
<div class="c" style="left:540px;top:581px;width:103px;text-align:right;"><i style="width:19.00px"><u style="transform:scaleX(0.9883)">25-</u></i><i style="width:22.27px"><u style="transform:scaleX(0.9409)">Sep</u></i><i style="width:19.00px"><u style="transform:scaleX(0.9883)">-23</u></i></div>
<div class="c" style="left:646px;top:581px;width:93px;text-align:right;"><i style="width:21.00px"><u style="transform:scaleX(0.9463)">200</u></i></div>
<div class="c" style="left:742px;top:581px;width:61px;text-align:right;"><i style="width:21.00px"><u style="transform:scaleX(0.9463)">200</u></i></div>
<div class="c" style="left:883px;top:581px;width:74px;text-align:right;"><i style="width:68.99px"><u style="transform:scaleX(0.9855)">-112,459.17</u></i></div>
<div class="c" style="left:960px;top:581px;width:118px;text-align:right;"><i style="width:19.00px"><u style="transform:scaleX(0.9883)">26-</u></i><i style="width:22.27px"><u style="transform:scaleX(0.9409)">Sep</u></i><i style="width:19.00px"><u style="transform:scaleX(0.9883)">-23</u></i></div>
<div class="c" style="left:23px;top:601px;width:160px;"><i style="width:59.32px"><u style="transform:scaleX(0.9434)">12520324 </u></i><i style="width:67.83px"><u style="transform:scaleX(0.8966)">BARTOSIAK</u></i></div>
<div class="c" style="left:186px;top:601px;width:222px;"><i style="width:87.19px"><u style="transform:scaleX(0.9750)">D Bartosiak FP</u></i><i style="width:14.00px"><u style="transform:scaleX(0.9463)">38</u></i><i style="width:17.33px"><u style="transform:scaleX(0.9019)">OK</u></i><i style="width:73.32px"><u style="transform:scaleX(0.9440)">3908013838 </u></i><i style="width:36.82px"><u style="transform:scaleX(0.9967)">/ROC/</u></i></div>
<div class="c" style="left:411px;top:601px;width:128px;"><i style="width:44.08px"><u style="transform:scaleX(1.0277)">Refund</u></i></div>
<div class="c" style="left:540px;top:601px;width:103px;text-align:right;"><i style="width:19.00px"><u style="transform:scaleX(0.9883)">25-</u></i><i style="width:22.27px"><u style="transform:scaleX(0.9409)">Sep</u></i><i style="width:19.00px"><u style="transform:scaleX(0.9883)">-23</u></i></div>
<div class="c" style="left:806px;top:601px;width:74px;text-align:right;"><i style="width:54.99px"><u style="transform:scaleX(0.9785)">-1,500.00</u></i></div>
<div class="c" style="left:883px;top:601px;width:74px;text-align:right;"><i style="width:68.99px"><u style="transform:scaleX(0.9855)">-112,659.17</u></i></div>
<div class="c" style="left:960px;top:601px;width:118px;text-align:right;"><i style="width:19.00px"><u style="transform:scaleX(0.9883)">26-</u></i><i style="width:22.27px"><u style="transform:scaleX(0.9409)">Sep</u></i><i style="width:19.00px"><u style="transform:scaleX(0.9883)">-23</u></i></div>
<div class="c" style="left:23px;top:621px;width:160px;"><i style="width:59.32px"><u style="transform:scaleX(0.9434)">12520324 </u></i><i style="width:58.94px"><u style="transform:scaleX(1.0494)">Milczarek</u></i></div>
<div class="c" style="left:186px;top:621px;width:222px;"><i style="width:115.75px"><u style="transform:scaleX(1.0039)">Adam Milczarek FP</u></i><i style="width:14.00px"><u style="transform:scaleX(0.9463)">37</u></i><i style="width:18.61px"><u style="transform:scaleX(0.9685)">NH</u></i><i style="width:70.00px"><u style="transform:scaleX(0.9463)">0013629802</u></i></div>
<div class="c" style="left:411px;top:621px;width:128px;"><i style="width:37.21px"><u style="transform:scaleX(1.0488)">Credit</u></i></div>
<div class="c" style="left:540px;top:621px;width:103px;text-align:right;"><i style="width:19.00px"><u style="transform:scaleX(0.9883)">24-</u></i><i style="width:23.61px"><u style="transform:scaleX(0.9975)">Aug</u></i><i style="width:19.00px"><u style="transform:scaleX(0.9883)">-23</u></i></div>
<div class="c" style="left:646px;top:621px;width:93px;text-align:right;"><i style="width:21.00px"><u style="transform:scaleX(0.9463)">200</u></i></div>
<div class="c" style="left:742px;top:621px;width:61px;text-align:right;"><i style="width:21.00px"><u style="transform:scaleX(0.9463)">200</u></i></div>
<div class="c" style="left:883px;top:621px;width:74px;text-align:right;"><i style="width:68.99px"><u style="transform:scaleX(0.9996)">-111,159.17</u></i></div>
<div class="c" style="left:960px;top:621px;width:118px;text-align:right;"><i style="width:19.00px"><u style="transform:scaleX(0.9883)">25-</u></i><i style="width:23.61px"><u style="transform:scaleX(0.9975)">Aug</u></i><i style="width:19.00px"><u style="transform:scaleX(0.9883)">-23</u></i></div>
<div class="c" style="left:23px;top:641px;width:160px;"><i style="width:59.32px"><u style="transform:scaleX(0.9434)">12520324 </u></i><i style="width:34.05px"><u style="transform:scaleX(0.9032)">SMYK</u></i></div>
<div class="c" style="left:186px;top:641px;width:222px;"><i style="width:95.61px"><u style="transform:scaleX(0.9653)">Zaneta Smyk FP</u></i><i style="width:14.00px"><u style="transform:scaleX(0.9463)">37</u></i><i style="width:18.61px"><u style="transform:scaleX(0.9685)">NH</u></i><i style="width:73.32px"><u style="transform:scaleX(0.9440)">0818075720 </u></i><i style="width:23.34px"><u style="transform:scaleX(0.9871)">/RO</u></i></div>
<div class="c" style="left:411px;top:641px;width:128px;"><i style="width:37.21px"><u style="transform:scaleX(1.0488)">Credit</u></i></div>
<div class="c" style="left:540px;top:641px;width:103px;text-align:right;"><i style="width:19.00px"><u style="transform:scaleX(0.9883)">24-</u></i><i style="width:23.61px"><u style="transform:scaleX(0.9975)">Aug</u></i><i style="width:19.00px"><u style="transform:scaleX(0.9883)">-23</u></i></div>
<div class="c" style="left:646px;top:641px;width:93px;text-align:right;"><i style="width:49.99px"><u style="transform:scaleX(0.9656)">1,500.00</u></i></div>
<div class="c" style="left:742px;top:641px;width:61px;text-align:right;"><i style="width:49.99px"><u style="transform:scaleX(0.9656)">1,500.00</u></i></div>
<div class="c" style="left:883px;top:641px;width:74px;text-align:right;"><i style="width:68.99px"><u style="transform:scaleX(0.9996)">-111,359.17</u></i></div>
<div class="c" style="left:960px;top:641px;width:118px;text-align:right;"><i style="width:19.00px"><u style="transform:scaleX(0.9883)">25-</u></i><i style="width:23.61px"><u style="transform:scaleX(0.9975)">Aug</u></i><i style="width:19.00px"><u style="transform:scaleX(0.9883)">-23</u></i></div>
<div class="c" style="left:23px;top:661px;width:160px;"><i style="width:59.32px"><u style="transform:scaleX(0.9434)">12520324 </u></i><i style="width:58.94px"><u style="transform:scaleX(1.0494)">Milczarek</u></i></div>
<div class="c" style="left:186px;top:661px;width:222px;"><i style="width:115.75px"><u style="transform:scaleX(1.0039)">Adam Milczarek FP</u></i><i style="width:14.00px"><u style="transform:scaleX(0.9463)">37</u></i><i style="width:18.61px"><u style="transform:scaleX(0.9685)">NH</u></i><i style="width:70.00px"><u style="transform:scaleX(0.9463)">0013629802</u></i></div>
<div class="c" style="left:411px;top:661px;width:128px;"><i style="width:44.08px"><u style="transform:scaleX(1.0277)">Refund</u></i></div>
<div class="c" style="left:540px;top:661px;width:103px;text-align:right;"><i style="width:19.00px"><u style="transform:scaleX(0.9883)">24-</u></i><i style="width:23.61px"><u style="transform:scaleX(0.9975)">Aug</u></i><i style="width:19.00px"><u style="transform:scaleX(0.9883)">-23</u></i></div>
<div class="c" style="left:806px;top:661px;width:74px;text-align:right;"><i style="width:54.99px"><u style="transform:scaleX(0.9785)">-1,500.00</u></i></div>
<div class="c" style="left:883px;top:661px;width:74px;text-align:right;"><i style="width:68.99px"><u style="transform:scaleX(0.9855)">-112,859.17</u></i></div>
<div class="c" style="left:960px;top:661px;width:118px;text-align:right;"><i style="width:19.00px"><u style="transform:scaleX(0.9883)">25-</u></i><i style="width:23.61px"><u style="transform:scaleX(0.9975)">Aug</u></i><i style="width:19.00px"><u style="transform:scaleX(0.9883)">-23</u></i></div>
<div class="c" style="left:23px;top:681px;width:160px;"><i style="width:59.32px"><u style="transform:scaleX(0.9434)">12520324 </u></i><i style="width:34.05px"><u style="transform:scaleX(0.9032)">SMYK</u></i></div>
<div class="c" style="left:186px;top:681px;width:222px;"><i style="width:95.61px"><u style="transform:scaleX(0.9653)">Zaneta Smyk FP</u></i><i style="width:14.00px"><u style="transform:scaleX(0.9463)">37</u></i><i style="width:18.61px"><u style="transform:scaleX(0.9685)">NH</u></i><i style="width:73.32px"><u style="transform:scaleX(0.9440)">0818075720 </u></i><i style="width:23.34px"><u style="transform:scaleX(0.9871)">/RO</u></i></div>
<div class="c" style="left:411px;top:681px;width:128px;"><i style="width:44.08px"><u style="transform:scaleX(1.0277)">Refund</u></i></div>
<div class="c" style="left:540px;top:681px;width:103px;text-align:right;"><i style="width:19.00px"><u style="transform:scaleX(0.9883)">24-</u></i><i style="width:23.61px"><u style="transform:scaleX(0.9975)">Aug</u></i><i style="width:19.00px"><u style="transform:scaleX(0.9883)">-23</u></i></div>
<div class="c" style="left:806px;top:681px;width:74px;text-align:right;"><i style="width:54.99px"><u style="transform:scaleX(0.9785)">-1,500.00</u></i></div>
<div class="c" style="left:883px;top:681px;width:74px;text-align:right;"><i style="width:68.99px"><u style="transform:scaleX(0.9996)">-111,359.17</u></i></div>
<div class="c" style="left:960px;top:681px;width:118px;text-align:right;"><i style="width:19.00px"><u style="transform:scaleX(0.9883)">25-</u></i><i style="width:23.61px"><u style="transform:scaleX(0.9975)">Aug</u></i><i style="width:19.00px"><u style="transform:scaleX(0.9883)">-23</u></i></div>
<div class="c" style="left:23px;top:701px;width:160px;"><i style="width:56.00px"><u style="transform:scaleX(0.9463)">12520324</u></i><i style="width:71.16px"><u style="transform:scaleX(0.9442)">KLIMOWICZ</u></i></div>
<div class="c" style="left:186px;top:701px;width:222px;"><i style="width:117.10px"><u style="transform:scaleX(0.9434)">KLIMOWICZ M H FP</u></i><i style="width:14.00px"><u style="transform:scaleX(0.9463)">37</u></i><i style="width:18.71px"><u style="transform:scaleX(1.0124)">ML</u></i><i style="width:70.00px"><u style="transform:scaleX(0.9591)">2241183519</u></i></div>
<div class="c" style="left:411px;top:701px;width:128px;"><i style="width:44.08px"><u style="transform:scaleX(1.0277)">Refund</u></i></div>
<div class="c" style="left:540px;top:701px;width:103px;text-align:right;"><i style="width:19.00px"><u style="transform:scaleX(0.9883)">23-</u></i><i style="width:23.61px"><u style="transform:scaleX(0.9975)">Aug</u></i><i style="width:19.00px"><u style="transform:scaleX(0.9883)">-23</u></i></div>
<div class="c" style="left:806px;top:701px;width:74px;text-align:right;"><i style="width:54.99px"><u style="transform:scaleX(0.9785)">-1,500.00</u></i></div>
<div class="c" style="left:883px;top:701px;width:74px;text-align:right;"><i style="width:68.99px"><u style="transform:scaleX(0.9718)">-109,859.17</u></i></div>
<div class="c" style="left:960px;top:701px;width:118px;text-align:right;"><i style="width:19.00px"><u style="transform:scaleX(0.9883)">24-</u></i><i style="width:23.61px"><u style="transform:scaleX(0.9975)">Aug</u></i><i style="width:19.00px"><u style="transform:scaleX(0.9883)">-23</u></i></div>
<div class="c" style="left:23px;top:721px;width:160px;"><i style="width:56.00px"><u style="transform:scaleX(0.9463)">12520324</u></i><i style="width:71.16px"><u style="transform:scaleX(0.9442)">KLIMOWICZ</u></i></div>
<div class="c" style="left:186px;top:721px;width:222px;"><i style="width:117.10px"><u style="transform:scaleX(0.9434)">KLIMOWICZ M H FP</u></i><i style="width:14.00px"><u style="transform:scaleX(0.9463)">37</u></i><i style="width:18.71px"><u style="transform:scaleX(1.0124)">ML</u></i><i style="width:70.00px"><u style="transform:scaleX(0.9591)">2241183519</u></i></div>
<div class="c" style="left:411px;top:721px;width:128px;"><i style="width:37.21px"><u style="transform:scaleX(1.0488)">Credit</u></i></div>
<div class="c" style="left:540px;top:721px;width:103px;text-align:right;"><i style="width:19.00px"><u style="transform:scaleX(0.9883)">23-</u></i><i style="width:23.61px"><u style="transform:scaleX(0.9975)">Aug</u></i><i style="width:19.00px"><u style="transform:scaleX(0.9883)">-23</u></i></div>
<div class="c" style="left:646px;top:721px;width:93px;text-align:right;"><i style="width:21.00px"><u style="transform:scaleX(0.9463)">200</u></i></div>
<div class="c" style="left:742px;top:721px;width:61px;text-align:right;"><i style="width:21.00px"><u style="transform:scaleX(0.9463)">200</u></i></div>
<div class="c" style="left:883px;top:721px;width:74px;text-align:right;"><i style="width:68.99px"><u style="transform:scaleX(0.9718)">-108,359.17</u></i></div>
<div class="c" style="left:960px;top:721px;width:118px;text-align:right;"><i style="width:19.00px"><u style="transform:scaleX(0.9883)">24-</u></i><i style="width:23.61px"><u style="transform:scaleX(0.9975)">Aug</u></i><i style="width:19.00px"><u style="transform:scaleX(0.9883)">-23</u></i></div>
<div class="c" style="left:23px;top:741px;width:160px;"><i style="width:59.32px"><u style="transform:scaleX(0.9434)">12520324 </u></i><i style="width:43.36px"><u style="transform:scaleX(1.0288)">Gowda</u></i></div>
<div class="c" style="left:186px;top:741px;width:222px;"><i style="width:146.14px"><u style="transform:scaleX(0.8894)">VIPS CONSULTANCY L FP</u></i><i style="width:14.00px"><u style="transform:scaleX(0.9463)">38</u></i><i style="width:6.17px"><u style="transform:scaleX(0.8336)">L</u></i><i style="width:63.00px"><u style="transform:scaleX(0.9463)">648447491</u></i></div>
<div class="c" style="left:411px;top:741px;width:128px;"><i style="width:37.21px"><u style="transform:scaleX(1.0488)">Credit</u></i></div>
<div class="c" style="left:540px;top:741px;width:103px;text-align:right;"><i style="width:19.00px"><u style="transform:scaleX(0.9883)">22-</u></i><i style="width:22.27px"><u style="transform:scaleX(0.9409)">Sep</u></i><i style="width:19.00px"><u style="transform:scaleX(0.9883)">-23</u></i></div>
<div class="c" style="left:646px;top:741px;width:93px;text-align:right;"><i style="width:21.00px"><u style="transform:scaleX(0.9463)">200</u></i></div>
<div class="c" style="left:742px;top:741px;width:61px;text-align:right;"><i style="width:21.00px"><u style="transform:scaleX(0.9463)">200</u></i></div>
<div class="c" style="left:883px;top:741px;width:74px;text-align:right;"><i style="width:68.99px"><u style="transform:scaleX(0.9718)">-108,559.17</u></i></div>
<div class="c" style="left:960px;top:741px;width:118px;text-align:right;"><i style="width:19.00px"><u style="transform:scaleX(0.9883)">25-</u></i><i style="width:22.27px"><u style="transform:scaleX(0.9409)">Sep</u></i><i style="width:19.00px"><u style="transform:scaleX(0.9883)">-23</u></i></div>
<div class="c" style="left:23px;top:761px;width:160px;"><i style="width:59.32px"><u style="transform:scaleX(0.9434)">12520324 </u></i><i style="width:43.36px"><u style="transform:scaleX(1.0288)">Gowda</u></i></div>
<div class="c" style="left:186px;top:761px;width:222px;"><i style="width:146.14px"><u style="transform:scaleX(0.8894)">VIPS CONSULTANCY L FP</u></i><i style="width:14.00px"><u style="transform:scaleX(0.9463)">38</u></i><i style="width:6.17px"><u style="transform:scaleX(0.8336)">L</u></i><i style="width:63.00px"><u style="transform:scaleX(0.9463)">648447491</u></i></div>
<div class="c" style="left:411px;top:761px;width:128px;"><i style="width:44.08px"><u style="transform:scaleX(1.0277)">Refund</u></i></div>
<div class="c" style="left:540px;top:761px;width:103px;text-align:right;"><i style="width:19.00px"><u style="transform:scaleX(0.9883)">22-</u></i><i style="width:22.27px"><u style="transform:scaleX(0.9409)">Sep</u></i><i style="width:19.00px"><u style="transform:scaleX(0.9883)">-23</u></i></div>
<div class="c" style="left:806px;top:761px;width:74px;text-align:right;"><i style="width:54.99px"><u style="transform:scaleX(0.9785)">-1,500.00</u></i></div>
<div class="c" style="left:883px;top:761px;width:74px;text-align:right;"><i style="width:68.99px"><u style="transform:scaleX(0.9718)">-108,759.17</u></i></div>
<div class="c" style="left:960px;top:761px;width:118px;text-align:right;"><i style="width:19.00px"><u style="transform:scaleX(0.9883)">25-</u></i><i style="width:22.27px"><u style="transform:scaleX(0.9409)">Sep</u></i><i style="width:19.00px"><u style="transform:scaleX(0.9883)">-23</u></i></div>
<div class="c" style="left:23px;top:781px;width:160px;"><i style="width:59.32px"><u style="transform:scaleX(0.9434)">12520324 </u></i><i style="width:61.40px"><u style="transform:scaleX(0.8836)">LUKASZKA</u></i></div>
<div class="c" style="left:186px;top:781px;width:222px;"><i style="width:117.72px"><u style="transform:scaleX(0.8848)">LUKASZKA K BBA FP</u></i><i style="width:7.00px"><u style="transform:scaleX(0.9463)">3</u></i><i style="width:21.39px"><u style="transform:scaleX(0.8769)">ALF</u></i><i style="width:70.00px"><u style="transform:scaleX(0.9591)">0321152712</u></i></div>
<div class="c" style="left:411px;top:781px;width:128px;"><i style="width:37.21px"><u style="transform:scaleX(1.0488)">Credit</u></i></div>
<div class="c" style="left:540px;top:781px;width:103px;text-align:right;"><i style="width:19.00px"><u style="transform:scaleX(0.9883)">22-</u></i><i style="width:24.33px"><u style="transform:scaleX(1.0286)">Nov</u></i><i style="width:19.00px"><u style="transform:scaleX(0.9883)">-23</u></i></div>
<div class="c" style="left:646px;top:781px;width:93px;text-align:right;"><i style="width:21.00px"><u style="transform:scaleX(0.9463)">550</u></i></div>
<div class="c" style="left:742px;top:781px;width:61px;text-align:right;"><i style="width:21.00px"><u style="transform:scaleX(0.9463)">550</u></i></div>
<div class="c" style="left:883px;top:781px;width:74px;text-align:right;"><i style="width:68.99px"><u style="transform:scaleX(0.9718)">-107,259.17</u></i></div>
<div class="c" style="left:960px;top:781px;width:118px;text-align:right;"><i style="width:19.00px"><u style="transform:scaleX(0.9883)">23-</u></i><i style="width:24.33px"><u style="transform:scaleX(1.0286)">Nov</u></i><i style="width:19.00px"><u style="transform:scaleX(0.9883)">-23</u></i></div>
<div class="c" style="left:23px;top:801px;width:160px;"><i style="width:59.32px"><u style="transform:scaleX(0.9434)">12520324 </u></i><i style="width:61.40px"><u style="transform:scaleX(0.8836)">LUKASZKA</u></i></div>
<div class="c" style="left:186px;top:801px;width:222px;"><i style="width:117.72px"><u style="transform:scaleX(0.8848)">LUKASZKA K BBA FP</u></i><i style="width:7.00px"><u style="transform:scaleX(0.9463)">3</u></i><i style="width:21.39px"><u style="transform:scaleX(0.8769)">ALF</u></i><i style="width:70.00px"><u style="transform:scaleX(0.9591)">0321152712</u></i></div>
<div class="c" style="left:411px;top:801px;width:128px;"><i style="width:44.08px"><u style="transform:scaleX(1.0277)">Refund</u></i></div>
<div class="c" style="left:540px;top:801px;width:103px;text-align:right;"><i style="width:19.00px"><u style="transform:scaleX(0.9883)">22-</u></i><i style="width:24.33px"><u style="transform:scaleX(1.0286)">Nov</u></i><i style="width:19.00px"><u style="transform:scaleX(0.9883)">-23</u></i></div>
<div class="c" style="left:806px;top:801px;width:74px;text-align:right;"><i style="width:54.99px"><u style="transform:scaleX(0.9785)">-1,500.00</u></i></div>
<div class="c" style="left:883px;top:801px;width:74px;text-align:right;"><i style="width:68.99px"><u style="transform:scaleX(0.9718)">-107,809.17</u></i></div>
<div class="c" style="left:960px;top:801px;width:118px;text-align:right;"><i style="width:19.00px"><u style="transform:scaleX(0.9883)">23-</u></i><i style="width:24.33px"><u style="transform:scaleX(1.0286)">Nov</u></i><i style="width:19.00px"><u style="transform:scaleX(0.9883)">-23</u></i></div>
<div class="c" style="left:23px;top:821px;width:160px;"><i style="width:59.32px"><u style="transform:scaleX(0.9434)">12520324 </u></i><i style="width:39.08px"><u style="transform:scaleX(1.0574)">Mazur</u></i></div>
<div class="c" style="left:186px;top:821px;width:222px;"><i style="width:46.43px"><u style="transform:scaleX(0.9662)">K Leyko</u></i><i style="width:5.00px"><u style="transform:scaleX(1.1285)">-</u></i><i style="width:56.71px"><u style="transform:scaleX(0.9837)">Mazur FP</u></i><i style="width:14.00px"><u style="transform:scaleX(0.9463)">39</u></i><i style="width:15.24px"><u style="transform:scaleX(0.8589)">KK</u></i><i style="width:73.32px"><u style="transform:scaleX(0.9440)">0440334901 </u></i><i style="width:23.34px"><u style="transform:scaleX(0.9871)">/RO</u></i></div>
<div class="c" style="left:411px;top:821px;width:128px;"><i style="width:44.08px"><u style="transform:scaleX(1.0277)">Refund</u></i></div>
<div class="c" style="left:540px;top:821px;width:103px;text-align:right;"><i style="width:19.00px"><u style="transform:scaleX(0.9883)">21-</u></i><i style="width:21.21px"><u style="transform:scaleX(1.0254)">Oct</u></i><i style="width:19.00px"><u style="transform:scaleX(0.9883)">-23</u></i></div>
<div class="c" style="left:806px;top:821px;width:74px;text-align:right;"><i style="width:54.99px"><u style="transform:scaleX(0.9785)">-1,500.00</u></i></div>
<div class="c" style="left:883px;top:821px;width:74px;text-align:right;"><i style="width:68.99px"><u style="transform:scaleX(0.9718)">-106,309.17</u></i></div>
<div class="c" style="left:960px;top:821px;width:118px;text-align:right;"><i style="width:19.00px"><u style="transform:scaleX(0.9883)">23-</u></i><i style="width:21.21px"><u style="transform:scaleX(1.0254)">Oct</u></i><i style="width:19.00px"><u style="transform:scaleX(0.9883)">-23</u></i></div>
<div class="c" style="left:23px;top:841px;width:160px;"><i style="width:59.32px"><u style="transform:scaleX(0.9434)">12520324 </u></i><i style="width:39.08px"><u style="transform:scaleX(1.0574)">Mazur</u></i></div>
<div class="c" style="left:186px;top:841px;width:222px;"><i style="width:46.43px"><u style="transform:scaleX(0.9662)">K Leyko</u></i><i style="width:5.00px"><u style="transform:scaleX(1.1285)">-</u></i><i style="width:56.71px"><u style="transform:scaleX(0.9837)">Mazur FP</u></i><i style="width:14.00px"><u style="transform:scaleX(0.9463)">39</u></i><i style="width:15.24px"><u style="transform:scaleX(0.8589)">KK</u></i><i style="width:73.32px"><u style="transform:scaleX(0.9440)">0440334901 </u></i><i style="width:23.34px"><u style="transform:scaleX(0.9871)">/RO</u></i></div>
<div class="c" style="left:411px;top:841px;width:128px;"><i style="width:37.21px"><u style="transform:scaleX(1.0488)">Credit</u></i></div>
<div class="c" style="left:540px;top:841px;width:103px;text-align:right;"><i style="width:19.00px"><u style="transform:scaleX(0.9883)">21-</u></i><i style="width:21.21px"><u style="transform:scaleX(1.0254)">Oct</u></i><i style="width:19.00px"><u style="transform:scaleX(0.9883)">-23</u></i></div>
<div class="c" style="left:646px;top:841px;width:93px;text-align:right;"><i style="width:21.00px"><u style="transform:scaleX(0.9463)">200</u></i></div>
<div class="c" style="left:742px;top:841px;width:61px;text-align:right;"><i style="width:21.00px"><u style="transform:scaleX(0.9463)">200</u></i></div>
<div class="c" style="left:883px;top:841px;width:74px;text-align:right;"><i style="width:68.99px"><u style="transform:scaleX(0.9718)">-104,809.17</u></i></div>
<div class="c" style="left:960px;top:841px;width:118px;text-align:right;"><i style="width:19.00px"><u style="transform:scaleX(0.9883)">23-</u></i><i style="width:21.21px"><u style="transform:scaleX(1.0254)">Oct</u></i><i style="width:19.00px"><u style="transform:scaleX(0.9883)">-23</u></i></div>
<div class="c" style="left:23px;top:861px;width:160px;"><i style="width:59.32px"><u style="transform:scaleX(0.9434)">12520324 </u></i><i style="width:56.38px"><u style="transform:scaleX(0.8868)">GOLABEK</u></i></div>
<div class="c" style="left:186px;top:861px;width:222px;"><i style="width:85.81px"><u style="transform:scaleX(0.8862)">GOLABEK A FP</u></i><i style="width:7.00px"><u style="transform:scaleX(0.9463)">3</u></i><i style="width:20.78px"><u style="transform:scaleX(0.8520)">AKJ</u></i><i style="width:73.32px"><u style="transform:scaleX(0.9440)">0349498425 </u></i><i style="width:40.35px"><u style="transform:scaleX(0.9415)">/EREF/</u></i></div>
<div class="c" style="left:411px;top:861px;width:128px;"><i style="width:37.21px"><u style="transform:scaleX(1.0488)">Credit</u></i></div>
<div class="c" style="left:540px;top:861px;width:103px;text-align:right;"><i style="width:19.00px"><u style="transform:scaleX(0.9883)">21-</u></i><i style="width:24.33px"><u style="transform:scaleX(1.0286)">Nov</u></i><i style="width:19.00px"><u style="transform:scaleX(0.9883)">-23</u></i></div>
<div class="c" style="left:646px;top:861px;width:93px;text-align:right;"><i style="width:21.00px"><u style="transform:scaleX(0.9463)">100</u></i></div>
<div class="c" style="left:742px;top:861px;width:61px;text-align:right;"><i style="width:21.00px"><u style="transform:scaleX(0.9463)">100</u></i></div>
<div class="c" style="left:883px;top:861px;width:74px;text-align:right;"><i style="width:68.99px"><u style="transform:scaleX(0.9718)">-105,009.17</u></i></div>
<div class="c" style="left:960px;top:861px;width:118px;text-align:right;"><i style="width:19.00px"><u style="transform:scaleX(0.9883)">22-</u></i><i style="width:24.33px"><u style="transform:scaleX(1.0286)">Nov</u></i><i style="width:19.00px"><u style="transform:scaleX(0.9883)">-23</u></i></div>
<div class="c" style="left:23px;top:881px;width:160px;"><i style="width:59.32px"><u style="transform:scaleX(0.9434)">12520324 </u></i><i style="width:56.38px"><u style="transform:scaleX(0.8868)">GOLABEK</u></i></div>
<div class="c" style="left:186px;top:881px;width:222px;"><i style="width:85.81px"><u style="transform:scaleX(0.8862)">GOLABEK A FP</u></i><i style="width:7.00px"><u style="transform:scaleX(0.9463)">3</u></i><i style="width:20.78px"><u style="transform:scaleX(0.8520)">AKJ</u></i><i style="width:73.32px"><u style="transform:scaleX(0.9440)">0349498425 </u></i><i style="width:40.35px"><u style="transform:scaleX(0.9415)">/EREF/</u></i></div>
<div class="c" style="left:411px;top:881px;width:128px;"><i style="width:44.08px"><u style="transform:scaleX(1.0277)">Refund</u></i></div>
<div class="c" style="left:540px;top:881px;width:103px;text-align:right;"><i style="width:19.00px"><u style="transform:scaleX(0.9883)">21-</u></i><i style="width:24.33px"><u style="transform:scaleX(1.0286)">Nov</u></i><i style="width:19.00px"><u style="transform:scaleX(0.9883)">-23</u></i></div>
<div class="c" style="left:806px;top:881px;width:74px;text-align:right;"><i style="width:54.99px"><u style="transform:scaleX(0.9785)">-1,500.00</u></i></div>
<div class="c" style="left:883px;top:881px;width:74px;text-align:right;"><i style="width:68.99px"><u style="transform:scaleX(0.9718)">-105,109.17</u></i></div>
<div class="c" style="left:960px;top:881px;width:118px;text-align:right;"><i style="width:19.00px"><u style="transform:scaleX(0.9883)">22-</u></i><i style="width:24.33px"><u style="transform:scaleX(1.0286)">Nov</u></i><i style="width:19.00px"><u style="transform:scaleX(0.9883)">-23</u></i></div>
<div class="c" style="left:23px;top:901px;width:160px;"><i style="width:129.20px"><u style="transform:scaleX(0.8742)">UPFXCURRENCYCLOU</u></i></div>
<div class="c" style="left:186px;top:901px;width:222px;"><i style="width:132.52px"><u style="transform:scaleX(0.8747)">UPFXCURRENCYCLOU </u></i><i style="width:35.00px"><u style="transform:scaleX(0.9463)">59846</u></i><i style="width:17.69px"><u style="transform:scaleX(0.9205)">OB</u></i><i style="width:14.00px"><u style="transform:scaleX(0.9463)">00</u></i><i style="width:21.53px"><u style="transform:scaleX(1.0288)">WA</u></i></div>
<div class="c" style="left:411px;top:901px;width:128px;"><i style="width:55.20px"><u style="transform:scaleX(1.0230)">Currency</u></i></div>
<div class="c" style="left:540px;top:901px;width:103px;text-align:right;"><i style="width:19.00px"><u style="transform:scaleX(0.9883)">21-</u></i><i style="width:23.61px"><u style="transform:scaleX(0.9975)">Aug</u></i><i style="width:19.00px"><u style="transform:scaleX(0.9883)">-23</u></i></div>
<div class="c" style="left:806px;top:901px;width:74px;text-align:right;"><i style="width:43.99px"><u style="transform:scaleX(0.9753)">-383.66</u></i></div>
<div class="c" style="left:883px;top:901px;width:74px;text-align:right;"><i style="width:68.99px"><u style="transform:scaleX(0.9718)">-103,609.17</u></i></div>
<div class="c" style="left:960px;top:901px;width:118px;text-align:right;"><i style="width:19.00px"><u style="transform:scaleX(0.9883)">22-</u></i><i style="width:23.61px"><u style="transform:scaleX(0.9975)">Aug</u></i><i style="width:19.00px"><u style="transform:scaleX(0.9883)">-23</u></i></div>
<div class="c" style="left:21px;top:921px;width:160px;text-align:right;"><i style="width:56.00px"><u style="transform:scaleX(0.9463)">62345366</u></i></div>
<div class="c" style="left:186px;top:921px;width:222px;"><i style="width:59.32px"><u style="transform:scaleX(0.9434)">62345366 </u></i><i style="width:19.64px"><u style="transform:scaleX(0.8857)">RBI</u></i><i style="width:35.00px"><u style="transform:scaleX(0.9463)">21083</u></i><i style="width:9.25px"><u style="transform:scaleX(0.8944)">G</u></i><i style="width:7.00px"><u style="transform:scaleX(0.9463)">7</u></i><i style="width:15.19px"><u style="transform:scaleX(0.8934)">LD</u></i><i style="width:7.00px"><u style="transform:scaleX(0.9463)">5</u></i><i style="width:6.17px"><u style="transform:scaleX(0.8336)">L</u></i><i style="width:7.00px"><u style="transform:scaleX(0.9463)">4</u></i><i style="width:70.73px"><u style="transform:scaleX(1.0288)">Z Protected</u></i></div>
<div class="c" style="left:411px;top:921px;width:128px;"><i style="width:17.17px"><u style="transform:scaleX(0.8300)">SFI</u></i></div>
<div class="c" style="left:540px;top:921px;width:103px;text-align:right;"><i style="width:19.00px"><u style="transform:scaleX(0.9883)">21-</u></i><i style="width:23.61px"><u style="transform:scaleX(0.9975)">Aug</u></i><i style="width:19.00px"><u style="transform:scaleX(0.9883)">-23</u></i></div>
<div class="c" style="left:806px;top:921px;width:74px;text-align:right;"><i style="width:29.99px"><u style="transform:scaleX(0.9894)">-27.4</u></i></div>
<div class="c" style="left:883px;top:921px;width:74px;text-align:right;"><i style="width:68.99px"><u style="transform:scaleX(0.9718)">-103,225.51</u></i></div>
<div class="c" style="left:960px;top:921px;width:118px;text-align:right;"><i style="width:19.00px"><u style="transform:scaleX(0.9883)">21-</u></i><i style="width:23.61px"><u style="transform:scaleX(0.9975)">Aug</u></i><i style="width:19.00px"><u style="transform:scaleX(0.9883)">-23</u></i></div>
<div class="c" style="left:23px;top:941px;width:160px;"><i style="width:129.20px"><u style="transform:scaleX(0.8742)">UPFXCURRENCYCLOU</u></i></div>
<div class="c" style="left:186px;top:941px;width:222px;"><i style="width:132.52px"><u style="transform:scaleX(0.8747)">UPFXCURRENCYCLOU </u></i><i style="width:35.00px"><u style="transform:scaleX(0.9723)">11736</u></i><i style="width:14.44px"><u style="transform:scaleX(0.8499)">PZ</u></i><i style="width:14.00px"><u style="transform:scaleX(0.9463)">00</u></i><i style="width:9.41px"><u style="transform:scaleX(0.9797)">U</u></i><i style="width:7.00px"><u style="transform:scaleX(0.9463)">6</u></i><i style="width:6.74px"><u style="transform:scaleX(0.8295)">F</u></i></div>
<div class="c" style="left:411px;top:941px;width:128px;"><i style="width:55.20px"><u style="transform:scaleX(1.0230)">Currency</u></i></div>
<div class="c" style="left:540px;top:941px;width:103px;text-align:right;"><i style="width:19.00px"><u style="transform:scaleX(0.9883)">20-</u></i><i style="width:21.21px"><u style="transform:scaleX(1.0254)">Oct</u></i><i style="width:19.00px"><u style="transform:scaleX(0.9883)">-23</u></i></div>
<div class="c" style="left:806px;top:941px;width:74px;text-align:right;"><i style="width:43.99px"><u style="transform:scaleX(0.9753)">-984.35</u></i></div>
<div class="c" style="left:883px;top:941px;width:74px;text-align:right;"><i style="width:68.99px"><u style="transform:scaleX(0.9855)">-103,198.11</u></i></div>
<div class="c" style="left:960px;top:941px;width:118px;text-align:right;"><i style="width:19.00px"><u style="transform:scaleX(0.9883)">23-</u></i><i style="width:21.21px"><u style="transform:scaleX(1.0254)">Oct</u></i><i style="width:19.00px"><u style="transform:scaleX(0.9883)">-23</u></i></div>
<div class="c" style="left:1163px;top:281px;width:182px;"><i style="width:7.00px"><u style="transform:scaleX(0.9463)">1</u></i><i style="width:7.15px"><u style="transform:scaleX(0.8797)">T</u></i><i style="width:49.00px"><u style="transform:scaleX(0.9463)">2518481</u></i></div>
<div class="c" style="left:1163px;top:301px;width:182px;"><i style="width:35.31px"><u style="transform:scaleX(0.9549)">24.99 </u></i><i style="width:55.98px"><u style="transform:scaleX(1.0099)">missing x</u></i><i style="width:10.32px"><u style="transform:scaleX(0.9300)">2 </u></i><i style="width:71.26px"><u style="transform:scaleX(1.0364)">for Refunds</u></i></div>
<div class="c" style="left:1163px;top:361px;width:182px;"><i style="width:7.00px"><u style="transform:scaleX(0.9463)">1</u></i><i style="width:7.15px"><u style="transform:scaleX(0.8797)">T</u></i><i style="width:49.00px"><u style="transform:scaleX(0.9463)">2531079</u></i></div>
<div class="c" style="left:1163px;top:381px;width:182px;"><i style="width:42.31px"><u style="transform:scaleX(0.9535)">529.79 </u></i><i style="width:93.48px"><u style="transform:scaleX(1.0198)">Refund missing</u></i></div>
<svg class="a" style="left:5px;top:208px;" width="13" height="13" viewBox="0 0 13 13"><path d="M12 1 V12 H1 Z" fill="#dcdcdc"/></svg>
<div class="a" style="left:20px;top:224px;width:1634px;height:1px;background:#a6a6a6;"></div>
<div class="a" style="left:0px;top:224px;width:20px;height:1px;background:#cfcfcf;"></div>
<div class="a" style="left:20px;top:224px;width:1px;height:735px;background:#a6a6a6;"></div>
<div class="a" style="left:20px;top:206px;width:1px;height:18px;background:#e0e0e0;"></div>
<div class="a" style="left:21px;top:300px;width:1633px;height:1px;background:#7c7c7c;"></div>
<div class="a" style="left:1653px;top:224px;width:1px;height:735px;background:#b0b0b0;"></div>
<div class="a" style="left:1654px;top:200px;width:12px;height:759px;background:#fff;"></div>
<div class="a" style="left:1657px;top:222px;width:18px;height:722px;background:#eaeaea;"></div>
<div class="a" style="left:1657px;top:207px;width:18px;height:15px;background:#fff;border:1px solid #a0a0a0;"></div>
<div class="a" style="left:1661px;top:211.5px;width:0;height:0;border-left:4.5px solid transparent;border-right:4.5px solid transparent;border-bottom:5px solid #222"></div>
<div class="a" style="left:1657px;top:221px;width:18px;height:121px;background:#fff;border:1px solid #a0a0a0;"></div>
<div class="a" style="left:1657px;top:944px;width:18px;height:14px;background:#fff;border:1px solid #a0a0a0;"></div>
<div class="a" style="left:1661.5px;top:949px;width:0;height:0;border-left:4.2px solid transparent;border-right:4.2px solid transparent;border-top:4.8px solid #222"></div>
<div class="a" style="left:592px;top:396px;width:71.4px;height:70.6px;border-radius:50%;border:3.4px solid #e6f03c"></div>
<svg class="a" style="left:625px;top:430px;" width="14" height="21" viewBox="0 0 14 21"><path d="M1 1 V16.2 L4.6 12.8 L7.4 19.4 L9.9 18.3 L7.1 11.9 H12 Z" fill="#fff" stroke="#222" stroke-width="1.1" stroke-linejoin="round"/></svg>
</div>
<div class="a" style="left:0px;top:959px;width:1666px;height:28px;background:#f5f5f5;"></div>
<div class="a" style="left:0px;top:958px;width:1654px;height:1px;background:#b4b4b4;"></div>
<div class="a" style="left:21.5px;top:968px;width:0;height:0;border-top:3.6px solid transparent;border-bottom:3.6px solid transparent;border-right:4.2px solid #c8c8c8"></div>
<div class="a" style="left:50px;top:968px;width:0;height:0;border-top:3.6px solid transparent;border-bottom:3.6px solid transparent;border-left:4.2px solid #c8c8c8"></div>
<div class="a" style="left:95.5px;top:959px;width:65.0px;height:24px;background:#fff;"></div>
<div class="a" style="left:95.5px;top:959px;width:1.0px;height:24px;background:#c9c9c9;"></div>
<div class="a" style="left:160px;top:959px;width:1px;height:24px;background:#c9c9c9;"></div>
<div class="a" style="left:95.5px;top:981px;width:65.5px;height:2.2999999999999545px;background:#2b7350;"></div>
<span class="t" style="left:106.5px;top:965.1px;font-size:12.5px;color:#2a6c4c;transform:scaleX(0.9880);font-weight:bold;">Sheet1</span>
<span class="t" style="left:172.7px;top:965.1px;font-size:12.5px;color:#555;transform:scaleX(0.9793);">Sheet2</span>
<div class="a" style="left:225px;top:963px;width:1px;height:18px;background:#c4c4c4;"></div>
<span class="t" style="left:237.8px;top:965.1px;font-size:12.5px;color:#555;transform:scaleX(0.9768);">Sheet3</span>
<div class="a" style="left:289px;top:963px;width:1px;height:18px;background:#c4c4c4;"></div>
<svg class="a" style="left:322px;top:963px;" width="18" height="18" viewBox="0 0 18 18"><g fill="none" stroke="#6a6a6a" stroke-width="1.1"><circle cx="9" cy="9" r="7.2"/><path d="M9 5.2 V12.8 M5.2 9 H12.8" stroke-width="1.4"/></g></svg>
<div class="a" style="left:1003px;top:965.5px;width:1.5px;height:1.5px;background:#9c9c9c;"></div>
<div class="a" style="left:1003px;top:970.5px;width:1.5px;height:1.5px;background:#9c9c9c;"></div>
<div class="a" style="left:1003px;top:975.5px;width:1.5px;height:1.5px;background:#9c9c9c;"></div>
<div class="a" style="left:1020px;top:965px;width:15px;height:15px;background:#fff;border:1px solid #a3a3a3;"></div>
<div class="a" style="left:1024.5px;top:968.3px;width:0;height:0;border-top:4.2px solid transparent;border-bottom:4.2px solid transparent;border-right:4.8px solid #222"></div>
<div class="a" style="left:1034px;top:965px;width:578px;height:15px;background:#fff;border:1px solid #a3a3a3;"></div>
<div class="a" style="left:1612px;top:965px;width:24px;height:15px;background:#ececec;"></div>
<div class="a" style="left:1636px;top:965px;width:15px;height:15px;background:#fff;border:1px solid #a3a3a3;"></div>
<div class="a" style="left:1641.5px;top:968.3px;width:0;height:0;border-top:4.2px solid transparent;border-bottom:4.2px solid transparent;border-left:4.8px solid #222"></div>
<div class="a" style="left:0px;top:987px;width:1666px;height:9px;background:#217346;"></div>
<div class="a" style="left:1375px;top:987px;width:40px;height:9px;background:#155236;"></div>
<div class="a" style="left:0;top:987px;width:1666px;height:9px;overflow:hidden"><div class="a" style="left:0;top:-987px;width:1666px;height:1000px"><span class="t" style="left:3.5px;top:992.3px;font-size:12px;color:#fff;transform:scaleX(0.9081);">Ready</span>
<span class="t" style="left:70.5px;top:992.3px;font-size:12px;color:#fff;transform:scaleX(0.9765);">Accessibility: Investigate</span>
<svg class="a" style="left:52px;top:988.6px;" width="16" height="10" viewBox="0 0 16 10"><g fill="none" stroke="#fff" stroke-width="1.3"><circle cx="7.5" cy="3" r="1.7"/><path d="M1.5 6.2 C4 8 6 7.4 7.5 6 C9 7.4 11 8 13.5 6.2"/><path d="M7.5 6 V10"/></g></svg>
<svg class="a" style="left:1257px;top:989px;" width="14" height="9" viewBox="0 0 14 9"><g fill="none" stroke="#fff" stroke-width="1.2"><rect x="1" y="1" width="12" height="10"/><path d="M5 4 V10 M8 3 V10"/></g></svg>
<span class="t" style="left:1275.0px;top:992.3px;font-size:12px;color:#fff;transform:scaleX(0.9007);">Display Settings</span>
<svg class="a" style="left:1386px;top:990px;" width="17" height="9" viewBox="0 0 17 9"><g fill="none" stroke="#fff" stroke-width="1.3"><rect x="1.5" y="1" width="14" height="12"/><path d="M6.2 1 V9 M10.8 1 V9 M1.5 5.5 H15.5"/></g></svg>
<svg class="a" style="left:1427px;top:990px;" width="17" height="9" viewBox="0 0 17 9"><g fill="none" stroke="#fff" stroke-width="1.3"><rect x="1.5" y="1" width="14" height="12"/><rect x="5" y="4.5" width="7" height="6"/></g></svg>
<svg class="a" style="left:1467px;top:990px;" width="17" height="9" viewBox="0 0 17 9"><g fill="none" stroke="#fff" stroke-width="1.3"><rect x="1.5" y="1" width="14" height="12"/><path d="M6.2 1 V9 M10.8 1 V9"/></g></svg>
<div class="a" style="left:1562.5px;top:992px;width:4.0px;height:4px;background:#fff;"></div>
<div class="a" style="left:1621.5px;top:993px;width:1.0px;height:3px;background:#cfe3d8;"></div>
<span class="t" style="left:1640.5px;top:992.3px;font-size:12px;color:#fff;transform:scaleX(0.9775);">100%</span></div></div>
</div>
</body></html>
